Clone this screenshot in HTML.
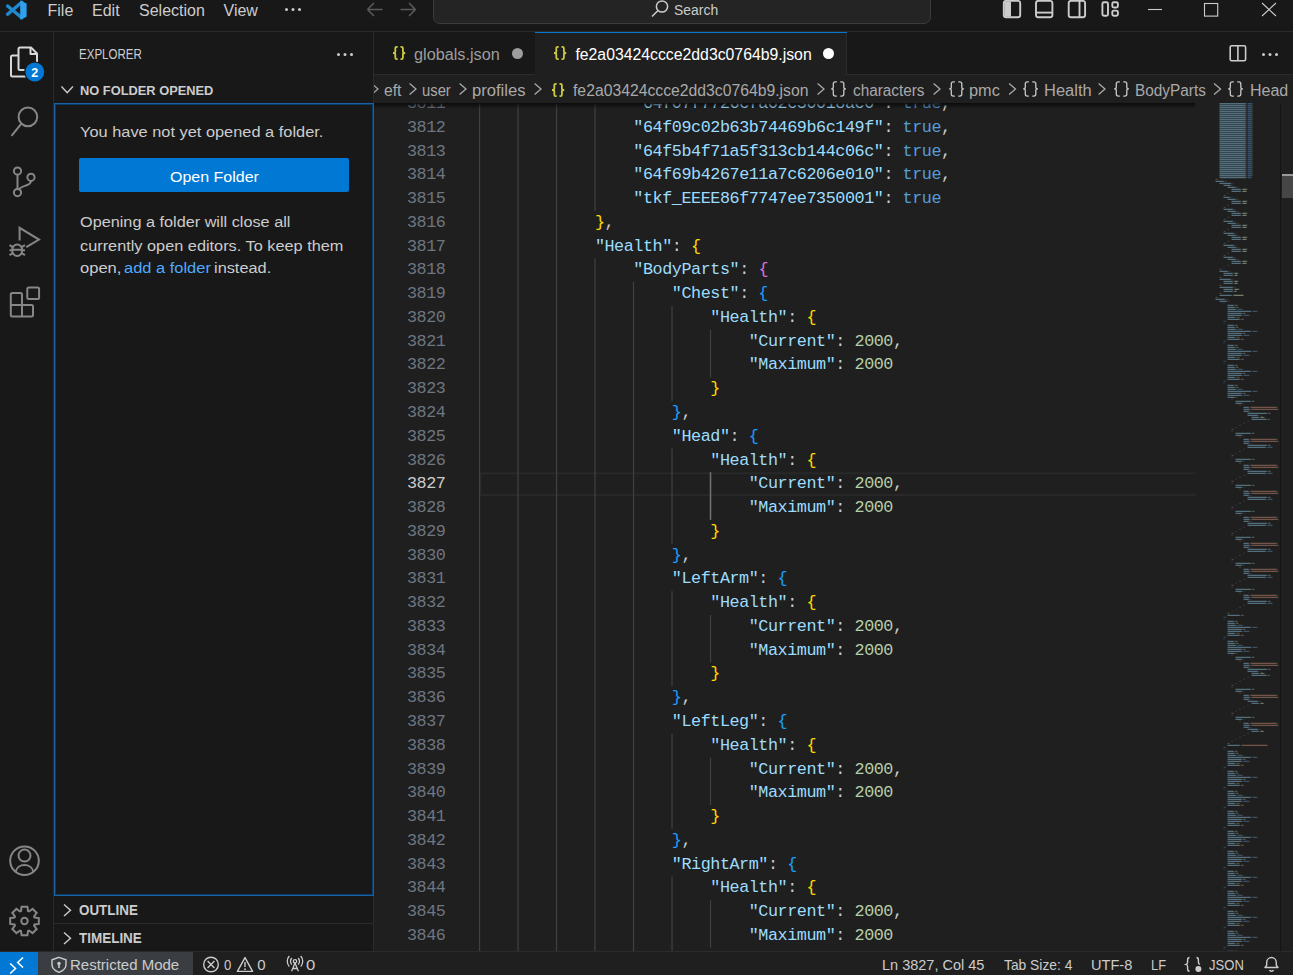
<!DOCTYPE html>
<html><head><meta charset="utf-8">
<style>
*{margin:0;padding:0;box-sizing:border-box}
html,body{width:1293px;height:975px;overflow:hidden;background:#181818;font-family:"Liberation Sans",sans-serif;color:#cccccc}
.a{position:absolute}
.t{position:absolute;white-space:nowrap}
#title{left:0;top:0;width:1293px;height:32px;background:#181818;border-bottom:1px solid #2b2b2b}
.menu{top:1px;font-size:16px;line-height:20px;color:#cccccc;white-space:nowrap}
#act{left:0;top:32px;width:54px;height:919px;background:#181818;border-right:1px solid #2b2b2b}
.cl{position:absolute;left:0;font-family:"Liberation Mono",monospace;font-size:16.8px;letter-spacing:-0.455px;white-space:pre;line-height:23.75px;height:23.75px}
</style></head><body>
<div id="title" class="a">
<svg class="a" style="left:0;top:0" width="34" height="24" viewBox="0 0 34 24">
<line x1="21.8" y1="2.2" x2="7.6" y2="14.2" stroke="#1f8ad2" stroke-width="3.4" stroke-linecap="round"/>
<line x1="7.6" y1="6.0" x2="21.8" y2="17.8" stroke="#1f8ad2" stroke-width="3.4" stroke-linecap="round"/>
<polygon points="20.2,0.6 26.6,3.4 26.6,16.8 20.2,19.8" fill="#2ea0ee"/>
</svg>
<div class="a menu" style="left:47.5px">File</div>
<div class="a menu" style="left:92px">Edit</div>
<div class="a menu" style="left:139px">Selection</div>
<div class="a menu" style="left:223.5px">View</div>
<div class="a" style="left:285px;top:8px;width:3px;height:3px;background:#ccc;border-radius:50%;box-shadow:6.5px 0 0 #ccc,13px 0 0 #ccc"></div>
<svg class="a" style="left:364px;top:0" width="60" height="20" viewBox="0 0 60 20">
<path d="M3.5 9.5 H18.5 M3.5 9.5 L10 3 M3.5 9.5 L10 16" stroke="#5a5a5a" stroke-width="1.5" fill="none"/>
<path d="M51.5 9.5 H36.5 M51.5 9.5 L45 3 M51.5 9.5 L45 16" stroke="#5a5a5a" stroke-width="1.5" fill="none"/>
</svg>
<div class="a" style="left:433px;top:-10px;width:498px;height:34px;background:#242424;border:1px solid #3c3c3c;border-radius:7px"></div>
<svg class="a" style="left:650px;top:-1px" width="20" height="20" viewBox="0 0 20 20">
<circle cx="12" cy="7.5" r="5.6" stroke="#cccccc" stroke-width="1.5" fill="none"/>
<line x1="8" y1="11.5" x2="2" y2="17.5" stroke="#cccccc" stroke-width="1.6"/>
</svg>

</div>
<div id="act" class="a">
<svg class="a" style="left:0;top:0" width="54" height="919" viewBox="0 32 54 919">
<g fill="none" stroke="#d7d7d7" stroke-width="2" stroke-linejoin="round">
<path d="M18.5 55.5 H12.5 Q11 55.5 11 57 V75 Q11 76.5 12.5 76.5 H28.5 Q30 76.5 30 75 V70.5"/>
<path d="M20 47.5 H31 L37 53.5 V68.5 Q37 70 35.5 70 H20 Q18.5 70 18.5 68.5 V49 Q18.5 47.5 20 47.5 Z"/>
<path d="M30.5 47.5 V54 H37"/>
</g>
<circle cx="34.8" cy="72" r="10.6" fill="#181818"/><circle cx="34.8" cy="72" r="9.4" fill="#0078d4"/>
<text x="34.8" y="76.6" font-family="Liberation Sans" font-weight="bold" font-size="12.5" fill="#fff" text-anchor="middle">2</text>
<g fill="none" stroke="#868686" stroke-width="2">
<circle cx="27.9" cy="116.9" r="9.3"/>
<path d="M21.2 123.8 L11.5 135.8"/>
<circle cx="17.5" cy="171" r="3.6"/>
<circle cx="17.5" cy="192.6" r="3.6"/>
<circle cx="31" cy="177.3" r="3.6"/>
<path d="M17.5 174.6 V189"/>
<path d="M31 180.9 C31 186.5 21 185 19 189.5"/>
<path d="M19.6 240.5 V227.8 L39 239.6 L26.3 247.2"/>
<ellipse cx="17.2" cy="250.2" rx="5" ry="5.8"/>
<path d="M12.2 249.7 H22.2 M9.5 245.2 L12.8 247 M25 245.2 L21.6 247 M9.5 255.2 L12.8 253.2 M25 255.2 L21.6 253.2 M9.5 250.2 H12.2 M22.2 250.2 H25"/>
<path d="M10.8 294.5 Q10.8 293 12.3 293 H20.5 Q22 293 22 294.5 V305 H31.5 Q33 305 33 306.5 V315 Q33 316.5 31.5 316.5 H12.3 Q10.8 316.5 10.8 315 Z M11 305 H22 V316"/>
<rect x="27.3" y="287.5" width="11.8" height="11.6" rx="1.5"/>
<circle cx="24.5" cy="860.7" r="14.3"/>
<circle cx="24.5" cy="855.6" r="6"/>
<path d="M15.6 871.8 C17.5 862.8 31.5 862.8 33.4 871.8"/>
<path d="M34.49 917.47 L38.81 918.10 L38.81 923.90 L34.49 924.53 L34.07 925.57 L36.67 929.07 L32.57 933.17 L29.07 930.57 L28.03 930.99 L27.40 935.31 L21.60 935.31 L20.97 930.99 L19.93 930.57 L16.43 933.17 L12.33 929.07 L14.93 925.57 L14.51 924.53 L10.19 923.90 L10.19 918.10 L14.51 917.47 L14.93 916.43 L12.33 912.93 L16.43 908.83 L19.93 911.43 L20.97 911.01 L21.60 906.69 L27.40 906.69 L28.03 911.01 L29.07 911.43 L32.57 908.83 L36.67 912.93 L34.07 916.43 Z"/>
<circle cx="24.5" cy="921" r="3.2"/>
</g>
</svg>
</div>
<div class="a" style="left:54px;top:32px;width:319px;height:919px;background:#181818"></div>
<div class="a" style="left:373px;top:32px;width:1px;height:919px;background:#2b2b2b"></div>
<div class="a" style="left:336.5px;top:52.5px;width:3px;height:3px;background:#ccc;border-radius:50%;box-shadow:6.5px 0 0 #ccc,13px 0 0 #ccc"></div>
<svg class="a" style="left:54px;top:80px" width="30" height="20" viewBox="54 80 30 20"><path d="M61.5 86.5 L67.2 92.8 L72.9 86.5" fill="none" stroke="#cccccc" stroke-width="1.4"/></svg>
<div class="a" style="left:54px;top:103px;width:320px;height:793px;border:1px solid #1b62a3;box-shadow:inset 0 0 0 1px #073c6b"></div>
<div class="a" style="left:79.3px;top:158.3px;width:269.5px;height:34px;background:#0078d4;border-radius:2px"></div>
<div class="a" style="left:54px;top:923px;width:319px;height:1px;background:#2b2b2b"></div>
<svg class="a" style="left:54px;top:896px" width="30" height="55" viewBox="54 896 30 55"><path d="M64 904.5 L70.5 910.2 L64 916" fill="none" stroke="#cccccc" stroke-width="1.4"/><path d="M64 932.5 L70.5 938.2 L64 944" fill="none" stroke="#cccccc" stroke-width="1.4"/></svg>
<div class="a" style="left:374px;top:32px;width:919px;height:43px;background:#181818"></div>
<div class="a" style="left:374px;top:74px;width:919px;height:1px;background:#2b2b2b"></div>
<div class="a" style="left:535px;top:32px;width:1px;height:43px;background:#2b2b2b"></div>
<div class="a" style="left:535px;top:32px;width:312px;height:43px;background:#1f1f1f;border-right:1px solid #2b2b2b"></div>
<div class="a" style="left:535px;top:32px;width:312px;height:1px;background:#0078d4"></div>
<svg class="a" style="left:391.0px;top:44.0px" width="16" height="18" viewBox="0 0 16 18"><path d="M6.7 2.8 H5.8 Q4.3 2.8 4.3 4.3 V7.5 Q4.3 9 2 9 Q4.3 9 4.3 10.5 V13.7 Q4.3 15.2 5.8 15.2 H6.7" fill="none" stroke="#cbcb41" stroke-width="1.8"/><path d="M9.5 2.8 H10.4 Q11.9 2.8 11.9 4.3 V7.5 Q11.9 9 14.2 9 Q11.9 9 11.9 10.5 V13.7 Q11.9 15.2 10.4 15.2 H9.5" fill="none" stroke="#cbcb41" stroke-width="1.8"/></svg>
<div class="a" style="left:511.5px;top:48px;width:11px;height:11px;border-radius:50%;background:#9d9d9d"></div>
<svg class="a" style="left:552.0px;top:44.0px" width="16" height="18" viewBox="0 0 16 18"><path d="M6.7 2.8 H5.8 Q4.3 2.8 4.3 4.3 V7.5 Q4.3 9 2 9 Q4.3 9 4.3 10.5 V13.7 Q4.3 15.2 5.8 15.2 H6.7" fill="none" stroke="#cbcb41" stroke-width="1.8"/><path d="M9.5 2.8 H10.4 Q11.9 2.8 11.9 4.3 V7.5 Q11.9 9 14.2 9 Q11.9 9 11.9 10.5 V13.7 Q11.9 15.2 10.4 15.2 H9.5" fill="none" stroke="#cbcb41" stroke-width="1.8"/></svg>
<div class="a" style="left:823px;top:48px;width:11px;height:11px;border-radius:50%;background:#ffffff"></div>
<svg class="a" style="left:1225px;top:40px" width="60" height="26" viewBox="1225 40 60 26"><rect x="1230.2" y="45.8" width="15.4" height="15" rx="1.5" fill="none" stroke="#cccccc" stroke-width="1.6"/><line x1="1237.9" y1="46" x2="1237.9" y2="61" stroke="#cccccc" stroke-width="1.6"/></svg>
<div class="a" style="left:1262px;top:52.5px;width:3px;height:3px;background:#ccc;border-radius:50%;box-shadow:6.5px 0 0 #ccc,13px 0 0 #ccc"></div>
<div class="a" style="left:374px;top:75px;width:919px;height:28px;background:#1f1f1f"></div>
<svg class="a" style="left:374px;top:75px" width="919" height="28" viewBox="374 75 919 28"><path d="M371.6 83.4 L378.0 89 L371.6 94.6" fill="none" stroke="#a9a9a9" stroke-width="1.3"/><path d="M409.6 83.4 L416.0 89 L409.6 94.6" fill="none" stroke="#a9a9a9" stroke-width="1.3"/><path d="M459.6 83.4 L466.0 89 L459.6 94.6" fill="none" stroke="#a9a9a9" stroke-width="1.3"/><path d="M534.6 83.4 L541.0 89 L534.6 94.6" fill="none" stroke="#a9a9a9" stroke-width="1.3"/><path d="M817.6 83.4 L824.0 89 L817.6 94.6" fill="none" stroke="#a9a9a9" stroke-width="1.3"/><path d="M933.6 83.4 L940.0 89 L933.6 94.6" fill="none" stroke="#a9a9a9" stroke-width="1.3"/><path d="M1009.1 83.4 L1015.5 89 L1009.1 94.6" fill="none" stroke="#a9a9a9" stroke-width="1.3"/><path d="M1098.6 83.4 L1105.0 89 L1098.6 94.6" fill="none" stroke="#a9a9a9" stroke-width="1.3"/><path d="M1214.1 83.4 L1220.5 89 L1214.1 94.6" fill="none" stroke="#a9a9a9" stroke-width="1.3"/></svg>
<svg class="a" style="left:550.0px;top:81.0px" width="16" height="18" viewBox="0 0 16 18"><path d="M6.7 2.8 H5.8 Q4.3 2.8 4.3 4.3 V7.5 Q4.3 9 2 9 Q4.3 9 4.3 10.5 V13.7 Q4.3 15.2 5.8 15.2 H6.7" fill="none" stroke="#cbcb41" stroke-width="1.8"/><path d="M9.5 2.8 H10.4 Q11.9 2.8 11.9 4.3 V7.5 Q11.9 9 14.2 9 Q11.9 9 11.9 10.5 V13.7 Q11.9 15.2 10.4 15.2 H9.5" fill="none" stroke="#cbcb41" stroke-width="1.8"/></svg>
<svg class="a" style="left:829.4px;top:80px" width="19" height="18" viewBox="0 0 19 18"><path d="M7.8 1.9 H6.3 Q4.3 1.9 4.3 3.9 V7.2 Q4.3 8.9 2.2 8.9 Q4.3 8.9 4.3 10.6 V14.1 Q4.3 16.1 6.3 16.1 H7.8" fill="none" stroke="#c8c8c8" stroke-width="1.3"/><path d="M11.3 1.9 H12.8 Q14.8 1.9 14.8 3.9 V7.2 Q14.8 8.9 16.9 8.9 Q14.8 8.9 14.8 10.6 V14.1 Q14.8 16.1 12.8 16.1 H11.3" fill="none" stroke="#c8c8c8" stroke-width="1.3"/></svg>
<svg class="a" style="left:947.0px;top:80px" width="19" height="18" viewBox="0 0 19 18"><path d="M7.8 1.9 H6.3 Q4.3 1.9 4.3 3.9 V7.2 Q4.3 8.9 2.2 8.9 Q4.3 8.9 4.3 10.6 V14.1 Q4.3 16.1 6.3 16.1 H7.8" fill="none" stroke="#c8c8c8" stroke-width="1.3"/><path d="M11.3 1.9 H12.8 Q14.8 1.9 14.8 3.9 V7.2 Q14.8 8.9 16.9 8.9 Q14.8 8.9 14.8 10.6 V14.1 Q14.8 16.1 12.8 16.1 H11.3" fill="none" stroke="#c8c8c8" stroke-width="1.3"/></svg>
<svg class="a" style="left:1021.4px;top:80px" width="19" height="18" viewBox="0 0 19 18"><path d="M7.8 1.9 H6.3 Q4.3 1.9 4.3 3.9 V7.2 Q4.3 8.9 2.2 8.9 Q4.3 8.9 4.3 10.6 V14.1 Q4.3 16.1 6.3 16.1 H7.8" fill="none" stroke="#c8c8c8" stroke-width="1.3"/><path d="M11.3 1.9 H12.8 Q14.8 1.9 14.8 3.9 V7.2 Q14.8 8.9 16.9 8.9 Q14.8 8.9 14.8 10.6 V14.1 Q14.8 16.1 12.8 16.1 H11.3" fill="none" stroke="#c8c8c8" stroke-width="1.3"/></svg>
<svg class="a" style="left:1112.1px;top:80px" width="19" height="18" viewBox="0 0 19 18"><path d="M7.8 1.9 H6.3 Q4.3 1.9 4.3 3.9 V7.2 Q4.3 8.9 2.2 8.9 Q4.3 8.9 4.3 10.6 V14.1 Q4.3 16.1 6.3 16.1 H7.8" fill="none" stroke="#c8c8c8" stroke-width="1.3"/><path d="M11.3 1.9 H12.8 Q14.8 1.9 14.8 3.9 V7.2 Q14.8 8.9 16.9 8.9 Q14.8 8.9 14.8 10.6 V14.1 Q14.8 16.1 12.8 16.1 H11.3" fill="none" stroke="#c8c8c8" stroke-width="1.3"/></svg>
<svg class="a" style="left:1226.4px;top:80px" width="19" height="18" viewBox="0 0 19 18"><path d="M7.8 1.9 H6.3 Q4.3 1.9 4.3 3.9 V7.2 Q4.3 8.9 2.2 8.9 Q4.3 8.9 4.3 10.6 V14.1 Q4.3 16.1 6.3 16.1 H7.8" fill="none" stroke="#c8c8c8" stroke-width="1.3"/><path d="M11.3 1.9 H12.8 Q14.8 1.9 14.8 3.9 V7.2 Q14.8 8.9 16.9 8.9 Q14.8 8.9 14.8 10.6 V14.1 Q14.8 16.1 12.8 16.1 H11.3" fill="none" stroke="#c8c8c8" stroke-width="1.3"/></svg>
<svg class="a" style="left:990px;top:0" width="303" height="30" viewBox="990 0 303 30">
<g fill="none" stroke="#cccccc" stroke-width="1.9">
<rect x="1003.8" y="0.9" width="16.4" height="16.4" rx="2.2"/>
<rect x="1036" y="0.9" width="16.4" height="16.4" rx="2.2"/><path d="M1036 12.6 H1052.4"/>
<rect x="1068.7" y="0.9" width="16.4" height="16.4" rx="2.2"/><path d="M1079.5 0.9 V17.3"/>
<rect x="1102.4" y="2.3" width="5.6" height="13.5" rx="1.5"/><rect x="1112.3" y="2.3" width="5.6" height="5.2" rx="1.5"/><rect x="1112.3" y="10.6" width="5.6" height="5.2" rx="1.5"/>
</g>
<rect x="1004.5" y="1.5" width="6.5" height="15.2" fill="#cccccc"/>
<g fill="none" stroke="#cccccc" stroke-width="1.1">
<path d="M1148 9.5 H1162"/>
<rect x="1204.5" y="3.5" width="13.2" height="12.6"/>
<path d="M1262 3 L1276 16 M1276 3 L1262 16"/>
</g></svg>
<div class="a" style="left:374px;top:103px;width:919px;height:848px;background:#1f1f1f;overflow:hidden">
<svg class="a" style="left:0;top:0" width="919" height="848" viewBox="374 103 919 848">
<path d="M1195.4 473.30 H480.50 V495.07 H1195.4" fill="none" stroke="#282828" stroke-width="2"/>
<rect x="478.90" y="91.98" width="1.25" height="1045.88" fill="#404040"/>
<rect x="517.40" y="91.98" width="1.25" height="1045.88" fill="#404040"/>
<rect x="555.90" y="91.98" width="1.25" height="1045.88" fill="#404040"/>
<rect x="594.40" y="91.98" width="1.25" height="118.85" fill="#404040"/>
<rect x="594.40" y="258.37" width="1.25" height="879.49" fill="#404040"/>
<rect x="632.90" y="282.14" width="1.25" height="855.72" fill="#404040"/>
<rect x="671.40" y="305.91" width="1.25" height="95.08" fill="#404040"/>
<rect x="671.40" y="448.53" width="1.25" height="95.08" fill="#404040"/>
<rect x="671.40" y="591.15" width="1.25" height="95.08" fill="#404040"/>
<rect x="671.40" y="733.77" width="1.25" height="95.08" fill="#404040"/>
<rect x="671.40" y="876.39" width="1.25" height="95.08" fill="#404040"/>
<rect x="671.40" y="1019.01" width="1.25" height="95.08" fill="#404040"/>
<rect x="709.90" y="329.68" width="1.25" height="47.54" fill="#404040"/>
<rect x="709.90" y="472.30" width="1.25" height="47.54" fill="#404040"/>
<rect x="709.90" y="614.92" width="1.25" height="47.54" fill="#404040"/>
<rect x="709.90" y="757.54" width="1.25" height="47.54" fill="#404040"/>
<rect x="709.90" y="900.16" width="1.25" height="47.54" fill="#404040"/>
<rect x="709.90" y="1042.78" width="1.25" height="47.54" fill="#404040"/>
<rect x="709.75" y="472.30" width="1.5" height="47.54" fill="#707070"/>
</svg>
<div class="cl" style="left:105.50px;top:-11.02px">                <span style="color:#9cdcfe">&quot;64f07f7726cfa02c30018ac0&quot;</span><span style="color:#cccccc">: </span><span style="color:#569cd6">true</span><span style="color:#cccccc">,</span></div>
<div class="cl" style="left:33.00px;top:-11.02px;color:#6e7681">3811</div>
<div class="cl" style="left:105.50px;top:12.75px">                <span style="color:#9cdcfe">&quot;64f09c02b63b74469b6c149f&quot;</span><span style="color:#cccccc">: </span><span style="color:#569cd6">true</span><span style="color:#cccccc">,</span></div>
<div class="cl" style="left:33.00px;top:12.75px;color:#6e7681">3812</div>
<div class="cl" style="left:105.50px;top:36.52px">                <span style="color:#9cdcfe">&quot;64f5b4f71a5f313cb144c06c&quot;</span><span style="color:#cccccc">: </span><span style="color:#569cd6">true</span><span style="color:#cccccc">,</span></div>
<div class="cl" style="left:33.00px;top:36.52px;color:#6e7681">3813</div>
<div class="cl" style="left:105.50px;top:60.29px">                <span style="color:#9cdcfe">&quot;64f69b4267e11a7c6206e010&quot;</span><span style="color:#cccccc">: </span><span style="color:#569cd6">true</span><span style="color:#cccccc">,</span></div>
<div class="cl" style="left:33.00px;top:60.29px;color:#6e7681">3814</div>
<div class="cl" style="left:105.50px;top:84.06px">                <span style="color:#9cdcfe">&quot;tkf_EEEE86f7747ee7350001&quot;</span><span style="color:#cccccc">: </span><span style="color:#569cd6">true</span></div>
<div class="cl" style="left:33.00px;top:84.06px;color:#6e7681">3815</div>
<div class="cl" style="left:105.50px;top:107.83px">            <span style="color:#ffd700">}</span><span style="color:#cccccc">,</span></div>
<div class="cl" style="left:33.00px;top:107.83px;color:#6e7681">3816</div>
<div class="cl" style="left:105.50px;top:131.60px">            <span style="color:#9cdcfe">&quot;Health&quot;</span><span style="color:#cccccc">: </span><span style="color:#ffd700">{</span></div>
<div class="cl" style="left:33.00px;top:131.60px;color:#6e7681">3817</div>
<div class="cl" style="left:105.50px;top:155.37px">                <span style="color:#9cdcfe">&quot;BodyParts&quot;</span><span style="color:#cccccc">: </span><span style="color:#da70d6">{</span></div>
<div class="cl" style="left:33.00px;top:155.37px;color:#6e7681">3818</div>
<div class="cl" style="left:105.50px;top:179.14px">                    <span style="color:#9cdcfe">&quot;Chest&quot;</span><span style="color:#cccccc">: </span><span style="color:#179fff">{</span></div>
<div class="cl" style="left:33.00px;top:179.14px;color:#6e7681">3819</div>
<div class="cl" style="left:105.50px;top:202.91px">                        <span style="color:#9cdcfe">&quot;Health&quot;</span><span style="color:#cccccc">: </span><span style="color:#ffd700">{</span></div>
<div class="cl" style="left:33.00px;top:202.91px;color:#6e7681">3820</div>
<div class="cl" style="left:105.50px;top:226.68px">                            <span style="color:#9cdcfe">&quot;Current&quot;</span><span style="color:#cccccc">: </span><span style="color:#b5cea8">2000</span><span style="color:#cccccc">,</span></div>
<div class="cl" style="left:33.00px;top:226.68px;color:#6e7681">3821</div>
<div class="cl" style="left:105.50px;top:250.45px">                            <span style="color:#9cdcfe">&quot;Maximum&quot;</span><span style="color:#cccccc">: </span><span style="color:#b5cea8">2000</span></div>
<div class="cl" style="left:33.00px;top:250.45px;color:#6e7681">3822</div>
<div class="cl" style="left:105.50px;top:274.22px">                        <span style="color:#ffd700">}</span></div>
<div class="cl" style="left:33.00px;top:274.22px;color:#6e7681">3823</div>
<div class="cl" style="left:105.50px;top:297.99px">                    <span style="color:#179fff">}</span><span style="color:#cccccc">,</span></div>
<div class="cl" style="left:33.00px;top:297.99px;color:#6e7681">3824</div>
<div class="cl" style="left:105.50px;top:321.76px">                    <span style="color:#9cdcfe">&quot;Head&quot;</span><span style="color:#cccccc">: </span><span style="color:#179fff">{</span></div>
<div class="cl" style="left:33.00px;top:321.76px;color:#6e7681">3825</div>
<div class="cl" style="left:105.50px;top:345.53px">                        <span style="color:#9cdcfe">&quot;Health&quot;</span><span style="color:#cccccc">: </span><span style="color:#ffd700">{</span></div>
<div class="cl" style="left:33.00px;top:345.53px;color:#6e7681">3826</div>
<div class="cl" style="left:105.50px;top:369.30px">                            <span style="color:#9cdcfe">&quot;Current&quot;</span><span style="color:#cccccc">: </span><span style="color:#b5cea8">2000</span><span style="color:#cccccc">,</span></div>
<div class="cl" style="left:33.00px;top:369.30px;color:#cccccc">3827</div>
<div class="cl" style="left:105.50px;top:393.07px">                            <span style="color:#9cdcfe">&quot;Maximum&quot;</span><span style="color:#cccccc">: </span><span style="color:#b5cea8">2000</span></div>
<div class="cl" style="left:33.00px;top:393.07px;color:#6e7681">3828</div>
<div class="cl" style="left:105.50px;top:416.84px">                        <span style="color:#ffd700">}</span></div>
<div class="cl" style="left:33.00px;top:416.84px;color:#6e7681">3829</div>
<div class="cl" style="left:105.50px;top:440.61px">                    <span style="color:#179fff">}</span><span style="color:#cccccc">,</span></div>
<div class="cl" style="left:33.00px;top:440.61px;color:#6e7681">3830</div>
<div class="cl" style="left:105.50px;top:464.38px">                    <span style="color:#9cdcfe">&quot;LeftArm&quot;</span><span style="color:#cccccc">: </span><span style="color:#179fff">{</span></div>
<div class="cl" style="left:33.00px;top:464.38px;color:#6e7681">3831</div>
<div class="cl" style="left:105.50px;top:488.15px">                        <span style="color:#9cdcfe">&quot;Health&quot;</span><span style="color:#cccccc">: </span><span style="color:#ffd700">{</span></div>
<div class="cl" style="left:33.00px;top:488.15px;color:#6e7681">3832</div>
<div class="cl" style="left:105.50px;top:511.92px">                            <span style="color:#9cdcfe">&quot;Current&quot;</span><span style="color:#cccccc">: </span><span style="color:#b5cea8">2000</span><span style="color:#cccccc">,</span></div>
<div class="cl" style="left:33.00px;top:511.92px;color:#6e7681">3833</div>
<div class="cl" style="left:105.50px;top:535.69px">                            <span style="color:#9cdcfe">&quot;Maximum&quot;</span><span style="color:#cccccc">: </span><span style="color:#b5cea8">2000</span></div>
<div class="cl" style="left:33.00px;top:535.69px;color:#6e7681">3834</div>
<div class="cl" style="left:105.50px;top:559.46px">                        <span style="color:#ffd700">}</span></div>
<div class="cl" style="left:33.00px;top:559.46px;color:#6e7681">3835</div>
<div class="cl" style="left:105.50px;top:583.23px">                    <span style="color:#179fff">}</span><span style="color:#cccccc">,</span></div>
<div class="cl" style="left:33.00px;top:583.23px;color:#6e7681">3836</div>
<div class="cl" style="left:105.50px;top:607.00px">                    <span style="color:#9cdcfe">&quot;LeftLeg&quot;</span><span style="color:#cccccc">: </span><span style="color:#179fff">{</span></div>
<div class="cl" style="left:33.00px;top:607.00px;color:#6e7681">3837</div>
<div class="cl" style="left:105.50px;top:630.77px">                        <span style="color:#9cdcfe">&quot;Health&quot;</span><span style="color:#cccccc">: </span><span style="color:#ffd700">{</span></div>
<div class="cl" style="left:33.00px;top:630.77px;color:#6e7681">3838</div>
<div class="cl" style="left:105.50px;top:654.54px">                            <span style="color:#9cdcfe">&quot;Current&quot;</span><span style="color:#cccccc">: </span><span style="color:#b5cea8">2000</span><span style="color:#cccccc">,</span></div>
<div class="cl" style="left:33.00px;top:654.54px;color:#6e7681">3839</div>
<div class="cl" style="left:105.50px;top:678.31px">                            <span style="color:#9cdcfe">&quot;Maximum&quot;</span><span style="color:#cccccc">: </span><span style="color:#b5cea8">2000</span></div>
<div class="cl" style="left:33.00px;top:678.31px;color:#6e7681">3840</div>
<div class="cl" style="left:105.50px;top:702.08px">                        <span style="color:#ffd700">}</span></div>
<div class="cl" style="left:33.00px;top:702.08px;color:#6e7681">3841</div>
<div class="cl" style="left:105.50px;top:725.85px">                    <span style="color:#179fff">}</span><span style="color:#cccccc">,</span></div>
<div class="cl" style="left:33.00px;top:725.85px;color:#6e7681">3842</div>
<div class="cl" style="left:105.50px;top:749.62px">                    <span style="color:#9cdcfe">&quot;RightArm&quot;</span><span style="color:#cccccc">: </span><span style="color:#179fff">{</span></div>
<div class="cl" style="left:33.00px;top:749.62px;color:#6e7681">3843</div>
<div class="cl" style="left:105.50px;top:773.39px">                        <span style="color:#9cdcfe">&quot;Health&quot;</span><span style="color:#cccccc">: </span><span style="color:#ffd700">{</span></div>
<div class="cl" style="left:33.00px;top:773.39px;color:#6e7681">3844</div>
<div class="cl" style="left:105.50px;top:797.16px">                            <span style="color:#9cdcfe">&quot;Current&quot;</span><span style="color:#cccccc">: </span><span style="color:#b5cea8">2000</span><span style="color:#cccccc">,</span></div>
<div class="cl" style="left:33.00px;top:797.16px;color:#6e7681">3845</div>
<div class="cl" style="left:105.50px;top:820.93px">                            <span style="color:#9cdcfe">&quot;Maximum&quot;</span><span style="color:#cccccc">: </span><span style="color:#b5cea8">2000</span></div>
<div class="cl" style="left:33.00px;top:820.93px;color:#6e7681">3846</div>
<div class="cl" style="left:105.50px;top:844.70px">                        <span style="color:#ffd700">}</span></div>
<div class="cl" style="left:33.00px;top:844.70px;color:#6e7681">3847</div>
</div>
<div class="a" style="left:374px;top:103px;width:821px;height:6px;background:linear-gradient(#0b0b0b 0%,rgba(0,0,0,0.45) 30%,rgba(0,0,0,0) 100%)"></div>
<svg class="a" style="left:1195px;top:103px" width="85" height="848" viewBox="1195 103 85 848">
<path d="M1219.5 102.7h26v1.6h-26zM1219.5 104.7h26v1.6h-26zM1219.5 106.7h26v1.6h-26zM1219.5 108.7h26v1.6h-26zM1219.5 110.7h26v1.6h-26zM1219.5 112.7h26v1.6h-26zM1219.5 114.7h26v1.6h-26zM1219.5 116.7h26v1.6h-26zM1219.5 118.7h26v1.6h-26zM1219.5 120.7h26v1.6h-26zM1219.5 122.7h26v1.6h-26zM1219.5 124.7h26v1.6h-26zM1219.5 126.7h26v1.6h-26zM1219.5 128.7h26v1.6h-26zM1219.5 130.7h26v1.6h-26zM1219.5 132.7h26v1.6h-26zM1219.5 134.7h26v1.6h-26zM1219.5 136.7h26v1.6h-26zM1219.5 138.7h26v1.6h-26zM1219.5 140.7h26v1.6h-26zM1219.5 142.7h26v1.6h-26zM1219.5 144.7h26v1.6h-26zM1219.5 146.7h26v1.6h-26zM1219.5 148.7h26v1.6h-26zM1219.5 150.7h26v1.6h-26zM1219.5 152.7h26v1.6h-26zM1219.5 154.7h26v1.6h-26zM1219.5 156.7h26v1.6h-26zM1219.5 158.7h26v1.6h-26zM1219.5 160.7h26v1.6h-26zM1219.5 162.7h26v1.6h-26zM1219.5 164.7h26v1.6h-26zM1219.5 166.7h26v1.6h-26zM1219.5 168.7h26v1.6h-26zM1219.5 170.7h26v1.6h-26zM1219.5 172.7h26v1.6h-26zM1219.5 174.7h26v1.6h-26zM1219.5 176.7h26v1.6h-26z" fill="#9cdcfe" fill-opacity="0.42"/>
<path d="M1245.5 102.7h1v1.6h-1zM1251.5 102.7h1v1.6h-1zM1245.5 104.7h1v1.6h-1zM1251.5 104.7h1v1.6h-1zM1245.5 106.7h1v1.6h-1zM1251.5 106.7h1v1.6h-1zM1245.5 108.7h1v1.6h-1zM1251.5 108.7h1v1.6h-1zM1245.5 110.7h1v1.6h-1zM1251.5 110.7h1v1.6h-1zM1245.5 112.7h1v1.6h-1zM1251.5 112.7h1v1.6h-1zM1245.5 114.7h1v1.6h-1zM1251.5 114.7h1v1.6h-1zM1245.5 116.7h1v1.6h-1zM1251.5 116.7h1v1.6h-1zM1245.5 118.7h1v1.6h-1zM1251.5 118.7h1v1.6h-1zM1245.5 120.7h1v1.6h-1zM1251.5 120.7h1v1.6h-1zM1245.5 122.7h1v1.6h-1zM1251.5 122.7h1v1.6h-1zM1245.5 124.7h1v1.6h-1zM1251.5 124.7h1v1.6h-1zM1245.5 126.7h1v1.6h-1zM1251.5 126.7h1v1.6h-1zM1245.5 128.7h1v1.6h-1zM1251.5 128.7h1v1.6h-1zM1245.5 130.7h1v1.6h-1zM1251.5 130.7h1v1.6h-1zM1245.5 132.7h1v1.6h-1zM1251.5 132.7h1v1.6h-1zM1245.5 134.7h1v1.6h-1zM1251.5 134.7h1v1.6h-1zM1245.5 136.7h1v1.6h-1zM1251.5 136.7h1v1.6h-1zM1245.5 138.7h1v1.6h-1zM1251.5 138.7h1v1.6h-1zM1245.5 140.7h1v1.6h-1zM1251.5 140.7h1v1.6h-1zM1245.5 142.7h1v1.6h-1zM1251.5 142.7h1v1.6h-1zM1245.5 144.7h1v1.6h-1zM1251.5 144.7h1v1.6h-1zM1245.5 146.7h1v1.6h-1zM1251.5 146.7h1v1.6h-1zM1245.5 148.7h1v1.6h-1zM1251.5 148.7h1v1.6h-1zM1245.5 150.7h1v1.6h-1zM1251.5 150.7h1v1.6h-1zM1245.5 152.7h1v1.6h-1zM1251.5 152.7h1v1.6h-1zM1245.5 154.7h1v1.6h-1zM1251.5 154.7h1v1.6h-1zM1245.5 156.7h1v1.6h-1zM1251.5 156.7h1v1.6h-1zM1245.5 158.7h1v1.6h-1zM1251.5 158.7h1v1.6h-1zM1245.5 160.7h1v1.6h-1zM1251.5 160.7h1v1.6h-1zM1245.5 162.7h1v1.6h-1zM1251.5 162.7h1v1.6h-1zM1245.5 164.7h1v1.6h-1zM1251.5 164.7h1v1.6h-1zM1245.5 166.7h1v1.6h-1zM1251.5 166.7h1v1.6h-1zM1245.5 168.7h1v1.6h-1zM1251.5 168.7h1v1.6h-1zM1245.5 170.7h1v1.6h-1zM1251.5 170.7h1v1.6h-1zM1245.5 172.7h1v1.6h-1zM1251.5 172.7h1v1.6h-1zM1245.5 174.7h1v1.6h-1zM1251.5 174.7h1v1.6h-1zM1245.5 176.7h1v1.6h-1z" fill="#cccccc" fill-opacity="0.28"/>
<path d="M1247.5 102.7h4v1.6h-4zM1247.5 104.7h4v1.6h-4zM1247.5 106.7h4v1.6h-4zM1247.5 108.7h4v1.6h-4zM1247.5 110.7h4v1.6h-4zM1247.5 112.7h4v1.6h-4zM1247.5 114.7h4v1.6h-4zM1247.5 116.7h4v1.6h-4zM1247.5 118.7h4v1.6h-4zM1247.5 120.7h4v1.6h-4zM1247.5 122.7h4v1.6h-4zM1247.5 124.7h4v1.6h-4zM1247.5 126.7h4v1.6h-4zM1247.5 128.7h4v1.6h-4zM1247.5 130.7h4v1.6h-4zM1247.5 132.7h4v1.6h-4zM1247.5 134.7h4v1.6h-4zM1247.5 136.7h4v1.6h-4zM1247.5 138.7h4v1.6h-4zM1247.5 140.7h4v1.6h-4zM1247.5 142.7h4v1.6h-4zM1247.5 144.7h4v1.6h-4zM1247.5 146.7h4v1.6h-4zM1247.5 148.7h4v1.6h-4zM1247.5 150.7h4v1.6h-4zM1247.5 152.7h4v1.6h-4zM1247.5 154.7h4v1.6h-4zM1247.5 156.7h4v1.6h-4zM1247.5 158.7h4v1.6h-4zM1247.5 160.7h4v1.6h-4zM1247.5 162.7h4v1.6h-4zM1247.5 164.7h4v1.6h-4zM1247.5 166.7h4v1.6h-4zM1247.5 168.7h4v1.6h-4zM1247.5 170.7h4v1.6h-4zM1247.5 172.7h4v1.6h-4zM1247.5 174.7h4v1.6h-4zM1247.5 176.7h4v1.6h-4z" fill="#569cd6" fill-opacity="0.42"/>
<path d="M1215.5 178.7h1v1.3h-1zM1225.5 180.7h1v1.3h-1zM1237.5 186.7h1v1.3h-1zM1227.5 192.7h1v1.3h-1zM1237.5 198.7h1v1.3h-1zM1227.5 204.7h1v1.3h-1zM1237.5 210.7h1v1.3h-1zM1227.5 216.7h1v1.3h-1zM1237.5 222.7h1v1.3h-1zM1227.5 228.7h1v1.3h-1zM1237.5 234.7h1v1.3h-1zM1227.5 240.7h1v1.3h-1zM1237.5 246.7h1v1.3h-1zM1227.5 252.7h1v1.3h-1zM1237.5 258.7h1v1.3h-1zM1227.5 264.7h1v1.3h-1zM1215.5 296.7h1v1.3h-1zM1226.5 298.7h1v1.3h-1zM1236.5 316.7h1v1.3h-1zM1237.5 316.7h1v1.3h-1zM1236.5 336.7h1v1.3h-1zM1237.5 336.7h1v1.3h-1zM1236.5 356.7h1v1.3h-1zM1237.5 356.7h1v1.3h-1zM1236.5 376.7h1v1.3h-1zM1237.5 376.7h1v1.3h-1zM1236.5 396.7h1v1.3h-1zM1239.5 404.7h1v1.3h-1zM1239.5 424.7h1v1.3h-1zM1239.5 436.7h1v1.3h-1zM1239.5 450.7h1v1.3h-1zM1239.5 462.7h1v1.3h-1zM1239.5 476.7h1v1.3h-1zM1239.5 488.7h1v1.3h-1zM1239.5 502.7h1v1.3h-1zM1239.5 514.7h1v1.3h-1zM1239.5 528.7h1v1.3h-1zM1239.5 540.7h1v1.3h-1zM1239.5 554.7h1v1.3h-1zM1239.5 566.7h1v1.3h-1zM1239.5 580.7h1v1.3h-1zM1239.5 592.7h1v1.3h-1zM1239.5 606.7h1v1.3h-1zM1227.5 612.7h1v1.3h-1zM1236.5 632.7h1v1.3h-1zM1237.5 632.7h1v1.3h-1zM1236.5 652.7h1v1.3h-1zM1239.5 660.7h1v1.3h-1zM1239.5 680.7h1v1.3h-1zM1239.5 692.7h1v1.3h-1zM1239.5 708.7h1v1.3h-1zM1239.5 720.7h1v1.3h-1zM1239.5 736.7h1v1.3h-1zM1227.5 742.7h1v1.3h-1zM1236.5 762.7h1v1.3h-1zM1237.5 762.7h1v1.3h-1zM1236.5 782.7h1v1.3h-1zM1237.5 782.7h1v1.3h-1zM1236.5 802.7h1v1.3h-1zM1237.5 802.7h1v1.3h-1zM1236.5 822.7h1v1.3h-1zM1237.5 822.7h1v1.3h-1zM1236.5 842.7h1v1.3h-1zM1237.5 842.7h1v1.3h-1zM1236.5 862.7h1v1.3h-1zM1237.5 862.7h1v1.3h-1zM1236.5 882.7h1v1.3h-1zM1237.5 882.7h1v1.3h-1zM1236.5 902.7h1v1.3h-1zM1237.5 902.7h1v1.3h-1zM1236.5 922.7h1v1.3h-1zM1237.5 922.7h1v1.3h-1zM1236.5 942.7h1v1.3h-1zM1237.5 942.7h1v1.3h-1z" fill="#ffd700" fill-opacity="0.25"/>
<path d="M1216.5 178.7h1v1.3h-1zM1223.5 180.7h1v1.3h-1zM1230.5 182.7h1v1.3h-1zM1230.5 184.7h1v1.3h-1zM1235.5 186.7h1v1.3h-1zM1240.5 188.7h1v1.3h-1zM1246.5 188.7h1v1.3h-1zM1240.5 190.7h1v1.3h-1zM1224.5 194.7h1v1.3h-1zM1229.5 196.7h1v1.3h-1zM1235.5 198.7h1v1.3h-1zM1240.5 200.7h1v1.3h-1zM1246.5 200.7h1v1.3h-1zM1240.5 202.7h1v1.3h-1zM1224.5 206.7h1v1.3h-1zM1232.5 208.7h1v1.3h-1zM1235.5 210.7h1v1.3h-1zM1240.5 212.7h1v1.3h-1zM1246.5 212.7h1v1.3h-1zM1240.5 214.7h1v1.3h-1zM1224.5 218.7h1v1.3h-1zM1232.5 220.7h1v1.3h-1zM1235.5 222.7h1v1.3h-1zM1240.5 224.7h1v1.3h-1zM1246.5 224.7h1v1.3h-1zM1240.5 226.7h1v1.3h-1zM1224.5 230.7h1v1.3h-1zM1233.5 232.7h1v1.3h-1zM1235.5 234.7h1v1.3h-1zM1240.5 236.7h1v1.3h-1zM1246.5 236.7h1v1.3h-1zM1240.5 238.7h1v1.3h-1zM1224.5 242.7h1v1.3h-1zM1233.5 244.7h1v1.3h-1zM1235.5 246.7h1v1.3h-1zM1240.5 248.7h1v1.3h-1zM1246.5 248.7h1v1.3h-1zM1240.5 250.7h1v1.3h-1zM1224.5 254.7h1v1.3h-1zM1232.5 256.7h1v1.3h-1zM1235.5 258.7h1v1.3h-1zM1240.5 260.7h1v1.3h-1zM1246.5 260.7h1v1.3h-1zM1240.5 262.7h1v1.3h-1zM1220.5 268.7h1v1.3h-1zM1227.5 270.7h1v1.3h-1zM1232.5 272.7h1v1.3h-1zM1237.5 272.7h1v1.3h-1zM1232.5 274.7h1v1.3h-1zM1220.5 276.7h1v1.3h-1zM1230.5 278.7h1v1.3h-1zM1232.5 280.7h1v1.3h-1zM1237.5 280.7h1v1.3h-1zM1232.5 282.7h1v1.3h-1zM1220.5 284.7h1v1.3h-1zM1232.5 286.7h1v1.3h-1zM1232.5 288.7h1v1.3h-1zM1238.5 288.7h1v1.3h-1zM1232.5 290.7h1v1.3h-1zM1220.5 292.7h1v1.3h-1zM1231.5 294.7h1v1.3h-1zM1216.5 296.7h1v1.3h-1zM1224.5 298.7h1v1.3h-1zM1226.5 300.7h1v1.3h-1zM1233.5 304.7h1v1.3h-1zM1236.5 304.7h1v1.3h-1zM1234.5 306.7h1v1.3h-1zM1237.5 306.7h1v1.3h-1zM1235.5 308.7h1v1.3h-1zM1241.5 308.7h1v1.3h-1zM1250.5 310.7h1v1.3h-1zM1256.5 310.7h1v1.3h-1zM1241.5 312.7h1v1.3h-1zM1244.5 312.7h1v1.3h-1zM1241.5 314.7h1v1.3h-1zM1248.5 314.7h1v1.3h-1zM1234.5 316.7h1v1.3h-1zM1238.5 316.7h1v1.3h-1zM1239.5 318.7h1v1.3h-1zM1224.5 320.7h1v1.3h-1zM1233.5 324.7h1v1.3h-1zM1236.5 324.7h1v1.3h-1zM1234.5 326.7h1v1.3h-1zM1237.5 326.7h1v1.3h-1zM1235.5 328.7h1v1.3h-1zM1241.5 328.7h1v1.3h-1zM1250.5 330.7h1v1.3h-1zM1256.5 330.7h1v1.3h-1zM1241.5 332.7h1v1.3h-1zM1244.5 332.7h1v1.3h-1zM1241.5 334.7h1v1.3h-1zM1248.5 334.7h1v1.3h-1zM1234.5 336.7h1v1.3h-1zM1238.5 336.7h1v1.3h-1zM1239.5 338.7h1v1.3h-1zM1224.5 340.7h1v1.3h-1zM1233.5 344.7h1v1.3h-1zM1236.5 344.7h1v1.3h-1zM1234.5 346.7h1v1.3h-1zM1237.5 346.7h1v1.3h-1zM1235.5 348.7h1v1.3h-1zM1241.5 348.7h1v1.3h-1zM1250.5 350.7h1v1.3h-1zM1256.5 350.7h1v1.3h-1zM1241.5 352.7h1v1.3h-1zM1244.5 352.7h1v1.3h-1zM1241.5 354.7h1v1.3h-1zM1248.5 354.7h1v1.3h-1zM1234.5 356.7h1v1.3h-1zM1238.5 356.7h1v1.3h-1zM1239.5 358.7h1v1.3h-1zM1224.5 360.7h1v1.3h-1zM1233.5 364.7h1v1.3h-1zM1236.5 364.7h1v1.3h-1zM1234.5 366.7h1v1.3h-1zM1237.5 366.7h1v1.3h-1zM1235.5 368.7h1v1.3h-1zM1241.5 368.7h1v1.3h-1zM1250.5 370.7h1v1.3h-1zM1256.5 370.7h1v1.3h-1zM1241.5 372.7h1v1.3h-1zM1244.5 372.7h1v1.3h-1zM1241.5 374.7h1v1.3h-1zM1248.5 374.7h1v1.3h-1zM1234.5 376.7h1v1.3h-1zM1238.5 376.7h1v1.3h-1zM1239.5 378.7h1v1.3h-1zM1224.5 380.7h1v1.3h-1zM1233.5 384.7h1v1.3h-1zM1236.5 384.7h1v1.3h-1zM1234.5 386.7h1v1.3h-1zM1237.5 386.7h1v1.3h-1zM1235.5 388.7h1v1.3h-1zM1241.5 388.7h1v1.3h-1zM1250.5 390.7h1v1.3h-1zM1256.5 390.7h1v1.3h-1zM1241.5 392.7h1v1.3h-1zM1244.5 392.7h1v1.3h-1zM1241.5 394.7h1v1.3h-1zM1248.5 394.7h1v1.3h-1zM1234.5 396.7h1v1.3h-1zM1250.5 400.7h1v1.3h-1zM1253.5 400.7h1v1.3h-1zM1241.5 402.7h1v1.3h-1zM1248.5 406.7h1v1.3h-1zM1276.5 406.7h1v1.3h-1zM1249.5 408.7h1v1.3h-1zM1277.5 408.7h1v1.3h-1zM1248.5 410.7h1v1.3h-1zM1266.5 412.7h1v1.3h-1zM1269.5 412.7h1v1.3h-1zM1257.5 414.7h1v1.3h-1zM1258.5 416.7h1v1.3h-1zM1263.5 416.7h1v1.3h-1zM1266.5 418.7h1v1.3h-1zM1232.5 428.7h1v1.3h-1zM1250.5 432.7h1v1.3h-1zM1253.5 432.7h1v1.3h-1zM1241.5 434.7h1v1.3h-1zM1248.5 438.7h1v1.3h-1zM1276.5 438.7h1v1.3h-1zM1249.5 440.7h1v1.3h-1zM1277.5 440.7h1v1.3h-1zM1248.5 442.7h1v1.3h-1zM1266.5 444.7h1v1.3h-1zM1269.5 444.7h1v1.3h-1zM1265.5 446.7h1v1.3h-1zM1232.5 454.7h1v1.3h-1zM1250.5 458.7h1v1.3h-1zM1253.5 458.7h1v1.3h-1zM1241.5 460.7h1v1.3h-1zM1248.5 464.7h1v1.3h-1zM1276.5 464.7h1v1.3h-1zM1249.5 466.7h1v1.3h-1zM1277.5 466.7h1v1.3h-1zM1248.5 468.7h1v1.3h-1zM1266.5 470.7h1v1.3h-1zM1269.5 470.7h1v1.3h-1zM1265.5 472.7h1v1.3h-1zM1232.5 480.7h1v1.3h-1zM1250.5 484.7h1v1.3h-1zM1253.5 484.7h1v1.3h-1zM1241.5 486.7h1v1.3h-1zM1248.5 490.7h1v1.3h-1zM1276.5 490.7h1v1.3h-1zM1249.5 492.7h1v1.3h-1zM1277.5 492.7h1v1.3h-1zM1248.5 494.7h1v1.3h-1zM1266.5 496.7h1v1.3h-1zM1269.5 496.7h1v1.3h-1zM1265.5 498.7h1v1.3h-1zM1232.5 506.7h1v1.3h-1zM1250.5 510.7h1v1.3h-1zM1253.5 510.7h1v1.3h-1zM1241.5 512.7h1v1.3h-1zM1248.5 516.7h1v1.3h-1zM1276.5 516.7h1v1.3h-1zM1249.5 518.7h1v1.3h-1zM1277.5 518.7h1v1.3h-1zM1248.5 520.7h1v1.3h-1zM1266.5 522.7h1v1.3h-1zM1269.5 522.7h1v1.3h-1zM1265.5 524.7h1v1.3h-1zM1232.5 532.7h1v1.3h-1zM1250.5 536.7h1v1.3h-1zM1253.5 536.7h1v1.3h-1zM1241.5 538.7h1v1.3h-1zM1248.5 542.7h1v1.3h-1zM1276.5 542.7h1v1.3h-1zM1249.5 544.7h1v1.3h-1zM1277.5 544.7h1v1.3h-1zM1248.5 546.7h1v1.3h-1zM1266.5 548.7h1v1.3h-1zM1269.5 548.7h1v1.3h-1zM1265.5 550.7h1v1.3h-1zM1232.5 558.7h1v1.3h-1zM1250.5 562.7h1v1.3h-1zM1253.5 562.7h1v1.3h-1zM1241.5 564.7h1v1.3h-1zM1248.5 568.7h1v1.3h-1zM1276.5 568.7h1v1.3h-1zM1249.5 570.7h1v1.3h-1zM1277.5 570.7h1v1.3h-1zM1248.5 572.7h1v1.3h-1zM1266.5 574.7h1v1.3h-1zM1269.5 574.7h1v1.3h-1zM1265.5 576.7h1v1.3h-1zM1232.5 584.7h1v1.3h-1zM1250.5 588.7h1v1.3h-1zM1253.5 588.7h1v1.3h-1zM1241.5 590.7h1v1.3h-1zM1248.5 594.7h1v1.3h-1zM1276.5 594.7h1v1.3h-1zM1249.5 596.7h1v1.3h-1zM1277.5 596.7h1v1.3h-1zM1248.5 598.7h1v1.3h-1zM1266.5 600.7h1v1.3h-1zM1269.5 600.7h1v1.3h-1zM1265.5 602.7h1v1.3h-1zM1228.5 612.7h1v1.3h-1zM1239.5 614.7h1v1.3h-1zM1224.5 616.7h1v1.3h-1zM1233.5 620.7h1v1.3h-1zM1236.5 620.7h1v1.3h-1zM1234.5 622.7h1v1.3h-1zM1237.5 622.7h1v1.3h-1zM1235.5 624.7h1v1.3h-1zM1241.5 624.7h1v1.3h-1zM1250.5 626.7h1v1.3h-1zM1256.5 626.7h1v1.3h-1zM1241.5 628.7h1v1.3h-1zM1244.5 628.7h1v1.3h-1zM1241.5 630.7h1v1.3h-1zM1248.5 630.7h1v1.3h-1zM1234.5 632.7h1v1.3h-1zM1238.5 632.7h1v1.3h-1zM1239.5 634.7h1v1.3h-1zM1224.5 636.7h1v1.3h-1zM1233.5 640.7h1v1.3h-1zM1236.5 640.7h1v1.3h-1zM1234.5 642.7h1v1.3h-1zM1237.5 642.7h1v1.3h-1zM1235.5 644.7h1v1.3h-1zM1241.5 644.7h1v1.3h-1zM1250.5 646.7h1v1.3h-1zM1256.5 646.7h1v1.3h-1zM1241.5 648.7h1v1.3h-1zM1244.5 648.7h1v1.3h-1zM1241.5 650.7h1v1.3h-1zM1248.5 650.7h1v1.3h-1zM1234.5 652.7h1v1.3h-1zM1250.5 656.7h1v1.3h-1zM1253.5 656.7h1v1.3h-1zM1241.5 658.7h1v1.3h-1zM1248.5 662.7h1v1.3h-1zM1276.5 662.7h1v1.3h-1zM1249.5 664.7h1v1.3h-1zM1277.5 664.7h1v1.3h-1zM1248.5 666.7h1v1.3h-1zM1266.5 668.7h1v1.3h-1zM1269.5 668.7h1v1.3h-1zM1257.5 670.7h1v1.3h-1zM1258.5 672.7h1v1.3h-1zM1263.5 672.7h1v1.3h-1zM1266.5 674.7h1v1.3h-1zM1232.5 684.7h1v1.3h-1zM1250.5 688.7h1v1.3h-1zM1253.5 688.7h1v1.3h-1zM1241.5 690.7h1v1.3h-1zM1248.5 694.7h1v1.3h-1zM1276.5 694.7h1v1.3h-1zM1249.5 696.7h1v1.3h-1zM1277.5 696.7h1v1.3h-1zM1248.5 698.7h1v1.3h-1zM1257.5 700.7h1v1.3h-1zM1258.5 702.7h1v1.3h-1zM1232.5 712.7h1v1.3h-1zM1250.5 716.7h1v1.3h-1zM1253.5 716.7h1v1.3h-1zM1241.5 718.7h1v1.3h-1zM1248.5 722.7h1v1.3h-1zM1276.5 722.7h1v1.3h-1zM1249.5 724.7h1v1.3h-1zM1277.5 724.7h1v1.3h-1zM1248.5 726.7h1v1.3h-1zM1257.5 728.7h1v1.3h-1zM1258.5 730.7h1v1.3h-1zM1228.5 742.7h1v1.3h-1zM1239.5 744.7h1v1.3h-1zM1224.5 746.7h1v1.3h-1zM1233.5 750.7h1v1.3h-1zM1236.5 750.7h1v1.3h-1zM1234.5 752.7h1v1.3h-1zM1237.5 752.7h1v1.3h-1zM1235.5 754.7h1v1.3h-1zM1241.5 754.7h1v1.3h-1zM1250.5 756.7h1v1.3h-1zM1256.5 756.7h1v1.3h-1zM1241.5 758.7h1v1.3h-1zM1244.5 758.7h1v1.3h-1zM1241.5 760.7h1v1.3h-1zM1248.5 760.7h1v1.3h-1zM1234.5 762.7h1v1.3h-1zM1238.5 762.7h1v1.3h-1zM1239.5 764.7h1v1.3h-1zM1224.5 766.7h1v1.3h-1zM1233.5 770.7h1v1.3h-1zM1236.5 770.7h1v1.3h-1zM1234.5 772.7h1v1.3h-1zM1237.5 772.7h1v1.3h-1zM1235.5 774.7h1v1.3h-1zM1241.5 774.7h1v1.3h-1zM1250.5 776.7h1v1.3h-1zM1256.5 776.7h1v1.3h-1zM1241.5 778.7h1v1.3h-1zM1244.5 778.7h1v1.3h-1zM1241.5 780.7h1v1.3h-1zM1248.5 780.7h1v1.3h-1zM1234.5 782.7h1v1.3h-1zM1238.5 782.7h1v1.3h-1zM1239.5 784.7h1v1.3h-1zM1224.5 786.7h1v1.3h-1zM1233.5 790.7h1v1.3h-1zM1236.5 790.7h1v1.3h-1zM1234.5 792.7h1v1.3h-1zM1237.5 792.7h1v1.3h-1zM1235.5 794.7h1v1.3h-1zM1241.5 794.7h1v1.3h-1zM1250.5 796.7h1v1.3h-1zM1256.5 796.7h1v1.3h-1zM1241.5 798.7h1v1.3h-1zM1244.5 798.7h1v1.3h-1zM1241.5 800.7h1v1.3h-1zM1248.5 800.7h1v1.3h-1zM1234.5 802.7h1v1.3h-1zM1238.5 802.7h1v1.3h-1zM1239.5 804.7h1v1.3h-1zM1224.5 806.7h1v1.3h-1zM1233.5 810.7h1v1.3h-1zM1236.5 810.7h1v1.3h-1zM1234.5 812.7h1v1.3h-1zM1237.5 812.7h1v1.3h-1zM1235.5 814.7h1v1.3h-1zM1241.5 814.7h1v1.3h-1zM1250.5 816.7h1v1.3h-1zM1256.5 816.7h1v1.3h-1zM1241.5 818.7h1v1.3h-1zM1244.5 818.7h1v1.3h-1zM1241.5 820.7h1v1.3h-1zM1248.5 820.7h1v1.3h-1zM1234.5 822.7h1v1.3h-1zM1238.5 822.7h1v1.3h-1zM1239.5 824.7h1v1.3h-1zM1224.5 826.7h1v1.3h-1zM1233.5 830.7h1v1.3h-1zM1236.5 830.7h1v1.3h-1zM1234.5 832.7h1v1.3h-1zM1237.5 832.7h1v1.3h-1zM1235.5 834.7h1v1.3h-1zM1241.5 834.7h1v1.3h-1zM1250.5 836.7h1v1.3h-1zM1256.5 836.7h1v1.3h-1zM1241.5 838.7h1v1.3h-1zM1244.5 838.7h1v1.3h-1zM1241.5 840.7h1v1.3h-1zM1248.5 840.7h1v1.3h-1zM1234.5 842.7h1v1.3h-1zM1238.5 842.7h1v1.3h-1zM1239.5 844.7h1v1.3h-1zM1224.5 846.7h1v1.3h-1zM1233.5 850.7h1v1.3h-1zM1236.5 850.7h1v1.3h-1zM1234.5 852.7h1v1.3h-1zM1237.5 852.7h1v1.3h-1zM1235.5 854.7h1v1.3h-1zM1241.5 854.7h1v1.3h-1zM1250.5 856.7h1v1.3h-1zM1256.5 856.7h1v1.3h-1zM1241.5 858.7h1v1.3h-1zM1244.5 858.7h1v1.3h-1zM1241.5 860.7h1v1.3h-1zM1248.5 860.7h1v1.3h-1zM1234.5 862.7h1v1.3h-1zM1238.5 862.7h1v1.3h-1zM1239.5 864.7h1v1.3h-1zM1224.5 866.7h1v1.3h-1zM1233.5 870.7h1v1.3h-1zM1236.5 870.7h1v1.3h-1zM1234.5 872.7h1v1.3h-1zM1237.5 872.7h1v1.3h-1zM1235.5 874.7h1v1.3h-1zM1241.5 874.7h1v1.3h-1zM1250.5 876.7h1v1.3h-1zM1256.5 876.7h1v1.3h-1zM1241.5 878.7h1v1.3h-1zM1244.5 878.7h1v1.3h-1zM1241.5 880.7h1v1.3h-1zM1248.5 880.7h1v1.3h-1zM1234.5 882.7h1v1.3h-1zM1238.5 882.7h1v1.3h-1zM1239.5 884.7h1v1.3h-1zM1224.5 886.7h1v1.3h-1zM1233.5 890.7h1v1.3h-1zM1236.5 890.7h1v1.3h-1zM1234.5 892.7h1v1.3h-1zM1237.5 892.7h1v1.3h-1zM1235.5 894.7h1v1.3h-1zM1241.5 894.7h1v1.3h-1zM1250.5 896.7h1v1.3h-1zM1256.5 896.7h1v1.3h-1zM1241.5 898.7h1v1.3h-1zM1244.5 898.7h1v1.3h-1zM1241.5 900.7h1v1.3h-1zM1248.5 900.7h1v1.3h-1zM1234.5 902.7h1v1.3h-1zM1238.5 902.7h1v1.3h-1zM1239.5 904.7h1v1.3h-1zM1224.5 906.7h1v1.3h-1zM1233.5 910.7h1v1.3h-1zM1236.5 910.7h1v1.3h-1zM1234.5 912.7h1v1.3h-1zM1237.5 912.7h1v1.3h-1zM1235.5 914.7h1v1.3h-1zM1241.5 914.7h1v1.3h-1zM1250.5 916.7h1v1.3h-1zM1256.5 916.7h1v1.3h-1zM1241.5 918.7h1v1.3h-1zM1244.5 918.7h1v1.3h-1zM1241.5 920.7h1v1.3h-1zM1248.5 920.7h1v1.3h-1zM1234.5 922.7h1v1.3h-1zM1238.5 922.7h1v1.3h-1zM1239.5 924.7h1v1.3h-1zM1224.5 926.7h1v1.3h-1zM1233.5 930.7h1v1.3h-1zM1236.5 930.7h1v1.3h-1zM1234.5 932.7h1v1.3h-1zM1237.5 932.7h1v1.3h-1zM1235.5 934.7h1v1.3h-1zM1241.5 934.7h1v1.3h-1zM1250.5 936.7h1v1.3h-1zM1256.5 936.7h1v1.3h-1zM1241.5 938.7h1v1.3h-1zM1244.5 938.7h1v1.3h-1zM1241.5 940.7h1v1.3h-1zM1248.5 940.7h1v1.3h-1zM1234.5 942.7h1v1.3h-1zM1238.5 942.7h1v1.3h-1zM1239.5 944.7h1v1.3h-1zM1224.5 946.7h1v1.3h-1zM1233.5 950.7h1v1.3h-1zM1236.5 950.7h1v1.3h-1z" fill="#cccccc" fill-opacity="0.28"/>
<path d="M1215.5 180.7h8v1.3h-8zM1219.5 182.7h11v1.3h-11zM1223.5 184.7h7v1.3h-7zM1227.5 186.7h8v1.3h-8zM1231.5 188.7h9v1.3h-9zM1231.5 190.7h9v1.3h-9zM1223.5 196.7h6v1.3h-6zM1227.5 198.7h8v1.3h-8zM1231.5 200.7h9v1.3h-9zM1231.5 202.7h9v1.3h-9zM1223.5 208.7h9v1.3h-9zM1227.5 210.7h8v1.3h-8zM1231.5 212.7h9v1.3h-9zM1231.5 214.7h9v1.3h-9zM1223.5 220.7h9v1.3h-9zM1227.5 222.7h8v1.3h-8zM1231.5 224.7h9v1.3h-9zM1231.5 226.7h9v1.3h-9zM1223.5 232.7h10v1.3h-10zM1227.5 234.7h8v1.3h-8zM1231.5 236.7h9v1.3h-9zM1231.5 238.7h9v1.3h-9zM1223.5 244.7h10v1.3h-10zM1227.5 246.7h8v1.3h-8zM1231.5 248.7h9v1.3h-9zM1231.5 250.7h9v1.3h-9zM1223.5 256.7h9v1.3h-9zM1227.5 258.7h8v1.3h-8zM1231.5 260.7h9v1.3h-9zM1231.5 262.7h9v1.3h-9zM1219.5 270.7h8v1.3h-8zM1223.5 272.7h9v1.3h-9zM1223.5 274.7h9v1.3h-9zM1219.5 278.7h11v1.3h-11zM1223.5 280.7h9v1.3h-9zM1223.5 282.7h9v1.3h-9zM1219.5 286.7h13v1.3h-13zM1223.5 288.7h9v1.3h-9zM1223.5 290.7h9v1.3h-9zM1219.5 294.7h12v1.3h-12zM1215.5 298.7h9v1.3h-9zM1219.5 300.7h7v1.3h-7zM1227.5 304.7h6v1.3h-6zM1227.5 306.7h7v1.3h-7zM1227.5 308.7h8v1.3h-8zM1227.5 310.7h23v1.3h-23zM1227.5 312.7h14v1.3h-14zM1227.5 314.7h14v1.3h-14zM1227.5 316.7h7v1.3h-7zM1227.5 318.7h12v1.3h-12zM1227.5 324.7h6v1.3h-6zM1227.5 326.7h7v1.3h-7zM1227.5 328.7h8v1.3h-8zM1227.5 330.7h23v1.3h-23zM1227.5 332.7h14v1.3h-14zM1227.5 334.7h14v1.3h-14zM1227.5 336.7h7v1.3h-7zM1227.5 338.7h12v1.3h-12zM1227.5 344.7h6v1.3h-6zM1227.5 346.7h7v1.3h-7zM1227.5 348.7h8v1.3h-8zM1227.5 350.7h23v1.3h-23zM1227.5 352.7h14v1.3h-14zM1227.5 354.7h14v1.3h-14zM1227.5 356.7h7v1.3h-7zM1227.5 358.7h12v1.3h-12zM1227.5 364.7h6v1.3h-6zM1227.5 366.7h7v1.3h-7zM1227.5 368.7h8v1.3h-8zM1227.5 370.7h23v1.3h-23zM1227.5 372.7h14v1.3h-14zM1227.5 374.7h14v1.3h-14zM1227.5 376.7h7v1.3h-7zM1227.5 378.7h12v1.3h-12zM1227.5 384.7h6v1.3h-6zM1227.5 386.7h7v1.3h-7zM1227.5 388.7h8v1.3h-8zM1227.5 390.7h23v1.3h-23zM1227.5 392.7h14v1.3h-14zM1227.5 394.7h14v1.3h-14zM1227.5 396.7h7v1.3h-7zM1235.5 400.7h15v1.3h-15zM1235.5 402.7h6v1.3h-6zM1243.5 406.7h5v1.3h-5zM1243.5 408.7h6v1.3h-6zM1243.5 410.7h5v1.3h-5zM1247.5 412.7h19v1.3h-19zM1247.5 414.7h10v1.3h-10zM1251.5 416.7h7v1.3h-7zM1251.5 418.7h15v1.3h-15zM1235.5 432.7h15v1.3h-15zM1235.5 434.7h6v1.3h-6zM1243.5 438.7h5v1.3h-5zM1243.5 440.7h6v1.3h-6zM1243.5 442.7h5v1.3h-5zM1247.5 444.7h19v1.3h-19zM1247.5 446.7h18v1.3h-18zM1235.5 458.7h15v1.3h-15zM1235.5 460.7h6v1.3h-6zM1243.5 464.7h5v1.3h-5zM1243.5 466.7h6v1.3h-6zM1243.5 468.7h5v1.3h-5zM1247.5 470.7h19v1.3h-19zM1247.5 472.7h18v1.3h-18zM1235.5 484.7h15v1.3h-15zM1235.5 486.7h6v1.3h-6zM1243.5 490.7h5v1.3h-5zM1243.5 492.7h6v1.3h-6zM1243.5 494.7h5v1.3h-5zM1247.5 496.7h19v1.3h-19zM1247.5 498.7h18v1.3h-18zM1235.5 510.7h15v1.3h-15zM1235.5 512.7h6v1.3h-6zM1243.5 516.7h5v1.3h-5zM1243.5 518.7h6v1.3h-6zM1243.5 520.7h5v1.3h-5zM1247.5 522.7h19v1.3h-19zM1247.5 524.7h18v1.3h-18zM1235.5 536.7h15v1.3h-15zM1235.5 538.7h6v1.3h-6zM1243.5 542.7h5v1.3h-5zM1243.5 544.7h6v1.3h-6zM1243.5 546.7h5v1.3h-5zM1247.5 548.7h19v1.3h-19zM1247.5 550.7h18v1.3h-18zM1235.5 562.7h15v1.3h-15zM1235.5 564.7h6v1.3h-6zM1243.5 568.7h5v1.3h-5zM1243.5 570.7h6v1.3h-6zM1243.5 572.7h5v1.3h-5zM1247.5 574.7h19v1.3h-19zM1247.5 576.7h18v1.3h-18zM1235.5 588.7h15v1.3h-15zM1235.5 590.7h6v1.3h-6zM1243.5 594.7h5v1.3h-5zM1243.5 596.7h6v1.3h-6zM1243.5 598.7h5v1.3h-5zM1247.5 600.7h19v1.3h-19zM1247.5 602.7h18v1.3h-18zM1227.5 614.7h12v1.3h-12zM1227.5 620.7h6v1.3h-6zM1227.5 622.7h7v1.3h-7zM1227.5 624.7h8v1.3h-8zM1227.5 626.7h23v1.3h-23zM1227.5 628.7h14v1.3h-14zM1227.5 630.7h14v1.3h-14zM1227.5 632.7h7v1.3h-7zM1227.5 634.7h12v1.3h-12zM1227.5 640.7h6v1.3h-6zM1227.5 642.7h7v1.3h-7zM1227.5 644.7h8v1.3h-8zM1227.5 646.7h23v1.3h-23zM1227.5 648.7h14v1.3h-14zM1227.5 650.7h14v1.3h-14zM1227.5 652.7h7v1.3h-7zM1235.5 656.7h15v1.3h-15zM1235.5 658.7h6v1.3h-6zM1243.5 662.7h5v1.3h-5zM1243.5 664.7h6v1.3h-6zM1243.5 666.7h5v1.3h-5zM1247.5 668.7h19v1.3h-19zM1247.5 670.7h10v1.3h-10zM1251.5 672.7h7v1.3h-7zM1251.5 674.7h15v1.3h-15zM1235.5 688.7h15v1.3h-15zM1235.5 690.7h6v1.3h-6zM1243.5 694.7h5v1.3h-5zM1243.5 696.7h6v1.3h-6zM1243.5 698.7h5v1.3h-5zM1247.5 700.7h10v1.3h-10zM1251.5 702.7h7v1.3h-7zM1235.5 716.7h15v1.3h-15zM1235.5 718.7h6v1.3h-6zM1243.5 722.7h5v1.3h-5zM1243.5 724.7h6v1.3h-6zM1243.5 726.7h5v1.3h-5zM1247.5 728.7h10v1.3h-10zM1251.5 730.7h7v1.3h-7zM1227.5 744.7h12v1.3h-12zM1227.5 750.7h6v1.3h-6zM1227.5 752.7h7v1.3h-7zM1227.5 754.7h8v1.3h-8zM1227.5 756.7h23v1.3h-23zM1227.5 758.7h14v1.3h-14zM1227.5 760.7h14v1.3h-14zM1227.5 762.7h7v1.3h-7zM1227.5 764.7h12v1.3h-12zM1227.5 770.7h6v1.3h-6zM1227.5 772.7h7v1.3h-7zM1227.5 774.7h8v1.3h-8zM1227.5 776.7h23v1.3h-23zM1227.5 778.7h14v1.3h-14zM1227.5 780.7h14v1.3h-14zM1227.5 782.7h7v1.3h-7zM1227.5 784.7h12v1.3h-12zM1227.5 790.7h6v1.3h-6zM1227.5 792.7h7v1.3h-7zM1227.5 794.7h8v1.3h-8zM1227.5 796.7h23v1.3h-23zM1227.5 798.7h14v1.3h-14zM1227.5 800.7h14v1.3h-14zM1227.5 802.7h7v1.3h-7zM1227.5 804.7h12v1.3h-12zM1227.5 810.7h6v1.3h-6zM1227.5 812.7h7v1.3h-7zM1227.5 814.7h8v1.3h-8zM1227.5 816.7h23v1.3h-23zM1227.5 818.7h14v1.3h-14zM1227.5 820.7h14v1.3h-14zM1227.5 822.7h7v1.3h-7zM1227.5 824.7h12v1.3h-12zM1227.5 830.7h6v1.3h-6zM1227.5 832.7h7v1.3h-7zM1227.5 834.7h8v1.3h-8zM1227.5 836.7h23v1.3h-23zM1227.5 838.7h14v1.3h-14zM1227.5 840.7h14v1.3h-14zM1227.5 842.7h7v1.3h-7zM1227.5 844.7h12v1.3h-12zM1227.5 850.7h6v1.3h-6zM1227.5 852.7h7v1.3h-7zM1227.5 854.7h8v1.3h-8zM1227.5 856.7h23v1.3h-23zM1227.5 858.7h14v1.3h-14zM1227.5 860.7h14v1.3h-14zM1227.5 862.7h7v1.3h-7zM1227.5 864.7h12v1.3h-12zM1227.5 870.7h6v1.3h-6zM1227.5 872.7h7v1.3h-7zM1227.5 874.7h8v1.3h-8zM1227.5 876.7h23v1.3h-23zM1227.5 878.7h14v1.3h-14zM1227.5 880.7h14v1.3h-14zM1227.5 882.7h7v1.3h-7zM1227.5 884.7h12v1.3h-12zM1227.5 890.7h6v1.3h-6zM1227.5 892.7h7v1.3h-7zM1227.5 894.7h8v1.3h-8zM1227.5 896.7h23v1.3h-23zM1227.5 898.7h14v1.3h-14zM1227.5 900.7h14v1.3h-14zM1227.5 902.7h7v1.3h-7zM1227.5 904.7h12v1.3h-12zM1227.5 910.7h6v1.3h-6zM1227.5 912.7h7v1.3h-7zM1227.5 914.7h8v1.3h-8zM1227.5 916.7h23v1.3h-23zM1227.5 918.7h14v1.3h-14zM1227.5 920.7h14v1.3h-14zM1227.5 922.7h7v1.3h-7zM1227.5 924.7h12v1.3h-12zM1227.5 930.7h6v1.3h-6zM1227.5 932.7h7v1.3h-7zM1227.5 934.7h8v1.3h-8zM1227.5 936.7h23v1.3h-23zM1227.5 938.7h14v1.3h-14zM1227.5 940.7h14v1.3h-14zM1227.5 942.7h7v1.3h-7zM1227.5 944.7h12v1.3h-12zM1227.5 950.7h6v1.3h-6z" fill="#9cdcfe" fill-opacity="0.42"/>
<path d="M1232.5 182.7h1v1.3h-1zM1219.5 268.7h1v1.3h-1zM1229.5 270.7h1v1.3h-1zM1219.5 276.7h1v1.3h-1zM1232.5 278.7h1v1.3h-1zM1219.5 284.7h1v1.3h-1zM1234.5 286.7h1v1.3h-1zM1219.5 292.7h1v1.3h-1zM1228.5 300.7h1v1.3h-1zM1231.5 398.7h1v1.3h-1zM1250.5 410.7h1v1.3h-1zM1243.5 422.7h1v1.3h-1zM1231.5 428.7h1v1.3h-1zM1231.5 430.7h1v1.3h-1zM1250.5 442.7h1v1.3h-1zM1243.5 448.7h1v1.3h-1zM1231.5 454.7h1v1.3h-1zM1231.5 456.7h1v1.3h-1zM1250.5 468.7h1v1.3h-1zM1243.5 474.7h1v1.3h-1zM1231.5 480.7h1v1.3h-1zM1231.5 482.7h1v1.3h-1zM1250.5 494.7h1v1.3h-1zM1243.5 500.7h1v1.3h-1zM1231.5 506.7h1v1.3h-1zM1231.5 508.7h1v1.3h-1zM1250.5 520.7h1v1.3h-1zM1243.5 526.7h1v1.3h-1zM1231.5 532.7h1v1.3h-1zM1231.5 534.7h1v1.3h-1zM1250.5 546.7h1v1.3h-1zM1243.5 552.7h1v1.3h-1zM1231.5 558.7h1v1.3h-1zM1231.5 560.7h1v1.3h-1zM1250.5 572.7h1v1.3h-1zM1243.5 578.7h1v1.3h-1zM1231.5 584.7h1v1.3h-1zM1231.5 586.7h1v1.3h-1zM1250.5 598.7h1v1.3h-1zM1243.5 604.7h1v1.3h-1zM1231.5 610.7h1v1.3h-1zM1231.5 654.7h1v1.3h-1zM1250.5 666.7h1v1.3h-1zM1243.5 678.7h1v1.3h-1zM1231.5 684.7h1v1.3h-1zM1231.5 686.7h1v1.3h-1zM1250.5 698.7h1v1.3h-1zM1243.5 706.7h1v1.3h-1zM1231.5 712.7h1v1.3h-1zM1231.5 714.7h1v1.3h-1zM1250.5 726.7h1v1.3h-1zM1243.5 734.7h1v1.3h-1zM1231.5 740.7h1v1.3h-1z" fill="#da70d6" fill-opacity="0.25"/>
<path d="M1232.5 184.7h1v1.3h-1zM1223.5 194.7h1v1.3h-1zM1231.5 196.7h1v1.3h-1zM1223.5 206.7h1v1.3h-1zM1234.5 208.7h1v1.3h-1zM1223.5 218.7h1v1.3h-1zM1234.5 220.7h1v1.3h-1zM1223.5 230.7h1v1.3h-1zM1235.5 232.7h1v1.3h-1zM1223.5 242.7h1v1.3h-1zM1235.5 244.7h1v1.3h-1zM1223.5 254.7h1v1.3h-1zM1234.5 256.7h1v1.3h-1zM1223.5 266.7h1v1.3h-1zM1223.5 302.7h1v1.3h-1zM1223.5 320.7h1v1.3h-1zM1223.5 322.7h1v1.3h-1zM1223.5 340.7h1v1.3h-1zM1223.5 342.7h1v1.3h-1zM1223.5 360.7h1v1.3h-1zM1223.5 362.7h1v1.3h-1zM1223.5 380.7h1v1.3h-1zM1223.5 382.7h1v1.3h-1zM1243.5 402.7h1v1.3h-1zM1259.5 414.7h1v1.3h-1zM1247.5 420.7h1v1.3h-1zM1235.5 426.7h1v1.3h-1zM1243.5 434.7h1v1.3h-1zM1235.5 452.7h1v1.3h-1zM1243.5 460.7h1v1.3h-1zM1235.5 478.7h1v1.3h-1zM1243.5 486.7h1v1.3h-1zM1235.5 504.7h1v1.3h-1zM1243.5 512.7h1v1.3h-1zM1235.5 530.7h1v1.3h-1zM1243.5 538.7h1v1.3h-1zM1235.5 556.7h1v1.3h-1zM1243.5 564.7h1v1.3h-1zM1235.5 582.7h1v1.3h-1zM1243.5 590.7h1v1.3h-1zM1235.5 608.7h1v1.3h-1zM1223.5 616.7h1v1.3h-1zM1223.5 618.7h1v1.3h-1zM1223.5 636.7h1v1.3h-1zM1223.5 638.7h1v1.3h-1zM1243.5 658.7h1v1.3h-1zM1259.5 670.7h1v1.3h-1zM1247.5 676.7h1v1.3h-1zM1235.5 682.7h1v1.3h-1zM1243.5 690.7h1v1.3h-1zM1259.5 700.7h1v1.3h-1zM1247.5 704.7h1v1.3h-1zM1235.5 710.7h1v1.3h-1zM1243.5 718.7h1v1.3h-1zM1259.5 728.7h1v1.3h-1zM1247.5 732.7h1v1.3h-1zM1235.5 738.7h1v1.3h-1zM1223.5 746.7h1v1.3h-1zM1223.5 748.7h1v1.3h-1zM1223.5 766.7h1v1.3h-1zM1223.5 768.7h1v1.3h-1zM1223.5 786.7h1v1.3h-1zM1223.5 788.7h1v1.3h-1zM1223.5 806.7h1v1.3h-1zM1223.5 808.7h1v1.3h-1zM1223.5 826.7h1v1.3h-1zM1223.5 828.7h1v1.3h-1zM1223.5 846.7h1v1.3h-1zM1223.5 848.7h1v1.3h-1zM1223.5 866.7h1v1.3h-1zM1223.5 868.7h1v1.3h-1zM1223.5 886.7h1v1.3h-1zM1223.5 888.7h1v1.3h-1zM1223.5 906.7h1v1.3h-1zM1223.5 908.7h1v1.3h-1zM1223.5 926.7h1v1.3h-1zM1223.5 928.7h1v1.3h-1zM1223.5 946.7h1v1.3h-1zM1223.5 948.7h1v1.3h-1z" fill="#179fff" fill-opacity="0.25"/>
<path d="M1242.5 188.7h4v1.3h-4zM1242.5 190.7h4v1.3h-4zM1242.5 200.7h4v1.3h-4zM1242.5 202.7h4v1.3h-4zM1242.5 212.7h4v1.3h-4zM1242.5 214.7h4v1.3h-4zM1242.5 224.7h4v1.3h-4zM1242.5 226.7h4v1.3h-4zM1242.5 236.7h4v1.3h-4zM1242.5 238.7h4v1.3h-4zM1242.5 248.7h4v1.3h-4zM1242.5 250.7h4v1.3h-4zM1242.5 260.7h4v1.3h-4zM1242.5 262.7h4v1.3h-4zM1234.5 272.7h3v1.3h-3zM1234.5 274.7h3v1.3h-3zM1234.5 280.7h3v1.3h-3zM1234.5 282.7h3v1.3h-3zM1234.5 288.7h4v1.3h-4zM1234.5 290.7h2v1.3h-2zM1233.5 294.7h10v1.3h-10zM1235.5 304.7h1v1.3h-1zM1236.5 306.7h1v1.3h-1zM1243.5 312.7h1v1.3h-1zM1235.5 324.7h1v1.3h-1zM1236.5 326.7h1v1.3h-1zM1243.5 332.7h1v1.3h-1zM1235.5 344.7h1v1.3h-1zM1236.5 346.7h1v1.3h-1zM1243.5 352.7h1v1.3h-1zM1235.5 364.7h1v1.3h-1zM1236.5 366.7h1v1.3h-1zM1243.5 372.7h1v1.3h-1zM1235.5 384.7h1v1.3h-1zM1236.5 386.7h1v1.3h-1zM1243.5 392.7h1v1.3h-1zM1252.5 400.7h1v1.3h-1zM1268.5 412.7h1v1.3h-1zM1260.5 416.7h3v1.3h-3zM1268.5 418.7h1v1.3h-1zM1252.5 432.7h1v1.3h-1zM1268.5 444.7h1v1.3h-1zM1252.5 458.7h1v1.3h-1zM1268.5 470.7h1v1.3h-1zM1252.5 484.7h1v1.3h-1zM1268.5 496.7h1v1.3h-1zM1252.5 510.7h1v1.3h-1zM1268.5 522.7h1v1.3h-1zM1252.5 536.7h1v1.3h-1zM1268.5 548.7h1v1.3h-1zM1252.5 562.7h1v1.3h-1zM1268.5 574.7h1v1.3h-1zM1252.5 588.7h1v1.3h-1zM1268.5 600.7h1v1.3h-1zM1235.5 620.7h1v1.3h-1zM1236.5 622.7h1v1.3h-1zM1243.5 628.7h1v1.3h-1zM1235.5 640.7h1v1.3h-1zM1236.5 642.7h1v1.3h-1zM1243.5 648.7h1v1.3h-1zM1252.5 656.7h1v1.3h-1zM1268.5 668.7h1v1.3h-1zM1260.5 672.7h3v1.3h-3zM1268.5 674.7h1v1.3h-1zM1252.5 688.7h1v1.3h-1zM1260.5 702.7h3v1.3h-3zM1252.5 716.7h1v1.3h-1zM1260.5 730.7h3v1.3h-3zM1235.5 750.7h1v1.3h-1zM1236.5 752.7h1v1.3h-1zM1243.5 758.7h1v1.3h-1zM1235.5 770.7h1v1.3h-1zM1236.5 772.7h1v1.3h-1zM1243.5 778.7h1v1.3h-1zM1235.5 790.7h1v1.3h-1zM1236.5 792.7h1v1.3h-1zM1243.5 798.7h1v1.3h-1zM1235.5 810.7h1v1.3h-1zM1236.5 812.7h1v1.3h-1zM1243.5 818.7h1v1.3h-1zM1235.5 830.7h1v1.3h-1zM1236.5 832.7h1v1.3h-1zM1243.5 838.7h1v1.3h-1zM1235.5 850.7h1v1.3h-1zM1236.5 852.7h1v1.3h-1zM1243.5 858.7h1v1.3h-1zM1235.5 870.7h1v1.3h-1zM1236.5 872.7h1v1.3h-1zM1243.5 878.7h1v1.3h-1zM1235.5 890.7h1v1.3h-1zM1236.5 892.7h1v1.3h-1zM1243.5 898.7h1v1.3h-1zM1235.5 910.7h1v1.3h-1zM1236.5 912.7h1v1.3h-1zM1243.5 918.7h1v1.3h-1zM1235.5 930.7h1v1.3h-1zM1236.5 932.7h1v1.3h-1zM1243.5 938.7h1v1.3h-1zM1235.5 950.7h1v1.3h-1z" fill="#b5cea8" fill-opacity="0.55"/>
<path d="M1237.5 308.7h4v1.3h-4zM1252.5 310.7h4v1.3h-4zM1243.5 314.7h5v1.3h-5zM1237.5 328.7h4v1.3h-4zM1252.5 330.7h4v1.3h-4zM1243.5 334.7h5v1.3h-5zM1237.5 348.7h4v1.3h-4zM1252.5 350.7h4v1.3h-4zM1243.5 354.7h5v1.3h-5zM1237.5 368.7h4v1.3h-4zM1252.5 370.7h4v1.3h-4zM1243.5 374.7h5v1.3h-5zM1237.5 388.7h4v1.3h-4zM1252.5 390.7h4v1.3h-4zM1243.5 394.7h5v1.3h-5zM1267.5 446.7h5v1.3h-5zM1267.5 472.7h5v1.3h-5zM1267.5 498.7h5v1.3h-5zM1267.5 524.7h5v1.3h-5zM1267.5 550.7h5v1.3h-5zM1267.5 576.7h5v1.3h-5zM1267.5 602.7h5v1.3h-5zM1237.5 624.7h4v1.3h-4zM1252.5 626.7h4v1.3h-4zM1243.5 630.7h5v1.3h-5zM1237.5 644.7h4v1.3h-4zM1252.5 646.7h4v1.3h-4zM1243.5 650.7h5v1.3h-5zM1237.5 754.7h4v1.3h-4zM1252.5 756.7h4v1.3h-4zM1243.5 760.7h5v1.3h-5zM1237.5 774.7h4v1.3h-4zM1252.5 776.7h4v1.3h-4zM1243.5 780.7h5v1.3h-5zM1237.5 794.7h4v1.3h-4zM1252.5 796.7h4v1.3h-4zM1243.5 800.7h5v1.3h-5zM1237.5 814.7h4v1.3h-4zM1252.5 816.7h4v1.3h-4zM1243.5 820.7h5v1.3h-5zM1237.5 834.7h4v1.3h-4zM1252.5 836.7h4v1.3h-4zM1243.5 840.7h5v1.3h-5zM1237.5 854.7h4v1.3h-4zM1252.5 856.7h4v1.3h-4zM1243.5 860.7h5v1.3h-5zM1237.5 874.7h4v1.3h-4zM1252.5 876.7h4v1.3h-4zM1243.5 880.7h5v1.3h-5zM1237.5 894.7h4v1.3h-4zM1252.5 896.7h4v1.3h-4zM1243.5 900.7h5v1.3h-5zM1237.5 914.7h4v1.3h-4zM1252.5 916.7h4v1.3h-4zM1243.5 920.7h5v1.3h-5zM1237.5 934.7h4v1.3h-4zM1252.5 936.7h4v1.3h-4zM1243.5 940.7h5v1.3h-5z" fill="#569cd6" fill-opacity="0.42"/>
<path d="M1241.5 318.7h2v1.3h-2zM1241.5 338.7h2v1.3h-2zM1241.5 358.7h2v1.3h-2zM1241.5 378.7h2v1.3h-2zM1250.5 406.7h26v1.3h-26zM1251.5 408.7h26v1.3h-26zM1250.5 438.7h26v1.3h-26zM1251.5 440.7h26v1.3h-26zM1250.5 464.7h26v1.3h-26zM1251.5 466.7h26v1.3h-26zM1250.5 490.7h26v1.3h-26zM1251.5 492.7h26v1.3h-26zM1250.5 516.7h26v1.3h-26zM1251.5 518.7h26v1.3h-26zM1250.5 542.7h26v1.3h-26zM1251.5 544.7h26v1.3h-26zM1250.5 568.7h26v1.3h-26zM1251.5 570.7h26v1.3h-26zM1250.5 594.7h26v1.3h-26zM1251.5 596.7h26v1.3h-26zM1241.5 614.7h2v1.3h-2zM1241.5 634.7h2v1.3h-2zM1250.5 662.7h26v1.3h-26zM1251.5 664.7h26v1.3h-26zM1250.5 694.7h26v1.3h-26zM1251.5 696.7h26v1.3h-26zM1250.5 722.7h26v1.3h-26zM1251.5 724.7h26v1.3h-26zM1241.5 744.7h26v1.3h-26zM1241.5 764.7h2v1.3h-2zM1241.5 784.7h2v1.3h-2zM1241.5 804.7h2v1.3h-2zM1241.5 824.7h2v1.3h-2zM1241.5 844.7h2v1.3h-2zM1241.5 864.7h2v1.3h-2zM1241.5 884.7h2v1.3h-2zM1241.5 904.7h2v1.3h-2zM1241.5 924.7h2v1.3h-2zM1241.5 944.7h2v1.3h-2z" fill="#ce9178" fill-opacity="0.48"/>
</svg>
<div class="a" style="left:1280px;top:103px;width:1px;height:848px;background:#141414"></div>
<div class="a" style="left:1282px;top:173.7px;width:11px;height:24.3px;background:#464646"></div>
<div class="a" style="left:1282px;top:173.7px;width:11px;height:2px;background:#9a9a9a"></div>
<div class="a" style="left:0;top:951px;width:1293px;height:24px;background:#1f1f1f;border-top:1px solid #2b2b2b"></div>
<div class="a" style="left:0;top:952px;width:38px;height:23px;background:#0078d4"></div>
<div class="a" style="left:38px;top:952px;width:154.7px;height:23px;background:#3a3e42"></div>
<svg class="a" style="left:0;top:951px" width="1293" height="24" viewBox="0 951 1293 24">
<path d="M10.2 963.5 L15.5 968.5 L10.2 973.5 M23 957.5 L17.7 962.5 L23 967.5" fill="none" stroke="#ffffff" stroke-width="1.6"/>
<path d="M59 957.3 L66 959.8 V964.5 C66 968.3 63 970.8 59 972.3 C55 970.8 52 968.3 52 964.5 V959.8 Z" fill="none" stroke="#cccccc" stroke-width="1.4"/>
<circle cx="59" cy="963.5" r="1.7" fill="#cccccc"/><rect x="58.2" y="964" width="1.6" height="4" fill="#cccccc"/>
<circle cx="211" cy="964.5" r="7.3" fill="none" stroke="#cccccc" stroke-width="1.4"/>
<path d="M207.6 961.1 L214.4 967.9 M214.4 961.1 L207.6 967.9" stroke="#cccccc" stroke-width="1.4"/>
<path d="M245 957.6 L252.6 971.4 H237.4 Z" fill="none" stroke="#cccccc" stroke-width="1.4" stroke-linejoin="round"/>
<path d="M245 962 V967" stroke="#cccccc" stroke-width="1.4"/><circle cx="245" cy="969.2" r="0.9" fill="#cccccc"/>
<circle cx="295" cy="961.3" r="1.7" fill="none" stroke="#cccccc" stroke-width="1.3"/>
<path d="M291.8 958 C290.2 960 290.2 962.6 291.8 964.6 M298.2 958 C299.8 960 299.8 962.6 298.2 964.6 M289.3 956 C286.6 959 286.6 963.6 289.3 966.6 M300.7 956 C303.4 959 303.4 963.6 300.7 966.6" fill="none" stroke="#cccccc" stroke-width="1.3"/>
<path d="M295 963 L291.6 971.3 M295 963 L298.4 971.3 M292.6 968.5 H297.4" fill="none" stroke="#cccccc" stroke-width="1.3"/>
<path d="M1189.5 957.5 C1187.6 957.5 1187.6 958.6 1187.6 960 V962.3 C1187.6 963.4 1187 964.1 1186 964.4 C1187 964.7 1187.6 965.4 1187.6 966.5 V968.8 C1187.6 970.2 1187.6 971.3 1189.5 971.3" fill="none" stroke="#cccccc" stroke-width="1.4"/>
<path d="M1196.5 957.5 C1198.4 957.5 1198.4 958.6 1198.4 960 V962.3 C1198.4 963.4 1199 964.1 1200 964.4" fill="none" stroke="#cccccc" stroke-width="1.4"/>
<circle cx="1198.4" cy="969" r="3" fill="#cccccc"/>
<path d="M1265 967.5 H1278 L1276.3 965.3 V962.5 C1276.3 959.5 1274 957.5 1271.5 957.5 C1269 957.5 1266.7 959.5 1266.7 962.5 V965.3 Z" fill="none" stroke="#cccccc" stroke-width="1.4" stroke-linejoin="round"/>
<path d="M1269.5 970 C1270 971.7 1273 971.7 1273.5 970" fill="none" stroke="#cccccc" stroke-width="1.4"/>
</svg>
<div class="t" style="left:674.30px;top:-0.97px;font-size:15.50px;line-height:22px;transform:scaleX(0.8991);transform-origin:0 0;color:#cccccc;">Search</div>
<div class="t" style="left:79.17px;top:43.85px;font-size:14.00px;line-height:20px;transform:scaleX(0.8252);transform-origin:0 0;color:#cccccc;">EXPLORER</div>
<div class="t" style="left:80.00px;top:81.26px;font-size:13.40px;line-height:19px;font-weight:bold;transform:scaleX(0.9587);transform-origin:0 0;color:#cccccc;">NO FOLDER OPENED</div>
<div class="t" style="left:80.00px;top:121.30px;font-size:15.30px;line-height:21px;transform:scaleX(1.0702);transform-origin:0 0;color:#cccccc;">You have not yet opened a folder.</div>
<div class="t" style="left:170.00px;top:165.60px;font-size:15.30px;line-height:21px;transform:scaleX(1.0455);transform-origin:0 0;color:#ffffff;">Open Folder</div>
<div class="t" style="left:79.70px;top:211.33px;font-size:15.20px;line-height:21px;transform:scaleX(1.0697);transform-origin:0 0;color:#cccccc;">Opening a folder will close all</div>
<div class="t" style="left:79.80px;top:234.53px;font-size:15.20px;line-height:21px;transform:scaleX(1.0734);transform-origin:0 0;color:#cccccc;">currently open editors. To keep them</div>
<div class="t" style="left:79.70px;top:257.23px;font-size:15.20px;line-height:21px;transform:scaleX(1.0901);transform-origin:0 0;color:#cccccc;">open,</div>
<div class="t" style="left:124.00px;top:257.23px;font-size:15.20px;line-height:21px;transform:scaleX(1.0828);transform-origin:0 0;color:#4daafc;">add a folder</div>
<div class="t" style="left:214.42px;top:257.23px;font-size:15.20px;line-height:21px;transform:scaleX(1.0751);transform-origin:0 0;color:#cccccc;">instead.</div>
<div class="t" style="left:79.40px;top:899.85px;font-size:14.00px;line-height:20px;font-weight:bold;transform:scaleX(0.9574);transform-origin:0 0;color:#cccccc;">OUTLINE</div>
<div class="t" style="left:79.40px;top:927.85px;font-size:14.00px;line-height:20px;font-weight:bold;transform:scaleX(0.9616);transform-origin:0 0;color:#cccccc;">TIMELINE</div>
<div class="t" style="left:414.00px;top:44.03px;font-size:15.80px;line-height:22px;transform:scaleX(1.0285);transform-origin:0 0;color:#9d9d9d;">globals.json</div>
<div class="t" style="left:575.40px;top:44.03px;font-size:15.80px;line-height:22px;color:#ffffff;">fe2a03424ccce2dd3c0764b9.json</div>
<div class="t" style="left:384.00px;top:79.56px;font-size:16.00px;line-height:22px;transform:scaleX(0.9813);transform-origin:0 0;color:#a9a9a9;">eft</div>
<div class="t" style="left:422.07px;top:79.56px;font-size:16.00px;line-height:22px;transform:scaleX(0.9254);transform-origin:0 0;color:#a9a9a9;">user</div>
<div class="t" style="left:471.96px;top:79.56px;font-size:16.00px;line-height:22px;transform:scaleX(1.0380);transform-origin:0 0;color:#a9a9a9;">profiles</div>
<div class="t" style="left:573.40px;top:79.56px;font-size:16.00px;line-height:22px;transform:scaleX(0.9840);transform-origin:0 0;color:#a9a9a9;">fe2a03424ccce2dd3c0764b9.json</div>
<div class="t" style="left:853.00px;top:79.56px;font-size:16.00px;line-height:22px;transform:scaleX(0.9572);transform-origin:0 0;color:#a9a9a9;">characters</div>
<div class="t" style="left:969.48px;top:79.56px;font-size:16.00px;line-height:22px;transform:scaleX(1.0196);transform-origin:0 0;color:#a9a9a9;">pmc</div>
<div class="t" style="left:1044.27px;top:79.56px;font-size:16.00px;line-height:22px;transform:scaleX(1.0304);transform-origin:0 0;color:#a9a9a9;">Health</div>
<div class="t" style="left:1134.64px;top:79.56px;font-size:16.00px;line-height:22px;transform:scaleX(0.9600);transform-origin:0 0;color:#a9a9a9;">BodyParts</div>
<div class="t" style="left:1250.00px;top:79.56px;font-size:16.00px;line-height:22px;color:#a9a9a9;">Head</div>
<div class="t" style="left:70.00px;top:954.00px;font-size:15.00px;line-height:21px;color:#cccccc;">Restricted Mode</div>
<div class="t" style="left:224.00px;top:954.00px;font-size:15.00px;line-height:21px;transform:scaleX(0.8750);transform-origin:0 0;color:#cccccc;">0</div>
<div class="t" style="left:257.30px;top:954.00px;font-size:15.00px;line-height:21px;color:#cccccc;">0</div>
<div class="t" style="left:306.30px;top:954.00px;font-size:15.00px;line-height:21px;transform:scaleX(1.1125);transform-origin:0 0;color:#cccccc;">0</div>
<div class="t" style="left:881.83px;top:954.00px;font-size:15.00px;line-height:21px;transform:scaleX(0.9668);transform-origin:0 0;color:#cccccc;">Ln 3827, Col 45</div>
<div class="t" style="left:1004.00px;top:954.00px;font-size:15.00px;line-height:21px;transform:scaleX(0.9206);transform-origin:0 0;color:#cccccc;">Tab Size: 4</div>
<div class="t" style="left:1091.03px;top:954.00px;font-size:15.00px;line-height:21px;transform:scaleX(0.9720);transform-origin:0 0;color:#cccccc;">UTF-8</div>
<div class="t" style="left:1150.54px;top:954.00px;font-size:15.00px;line-height:21px;transform:scaleX(0.8567);transform-origin:0 0;color:#cccccc;">LF</div>
<div class="t" style="left:1209.30px;top:954.00px;font-size:15.00px;line-height:21px;transform:scaleX(0.8705);transform-origin:0 0;color:#cccccc;">JSON</div>
</body></html>
